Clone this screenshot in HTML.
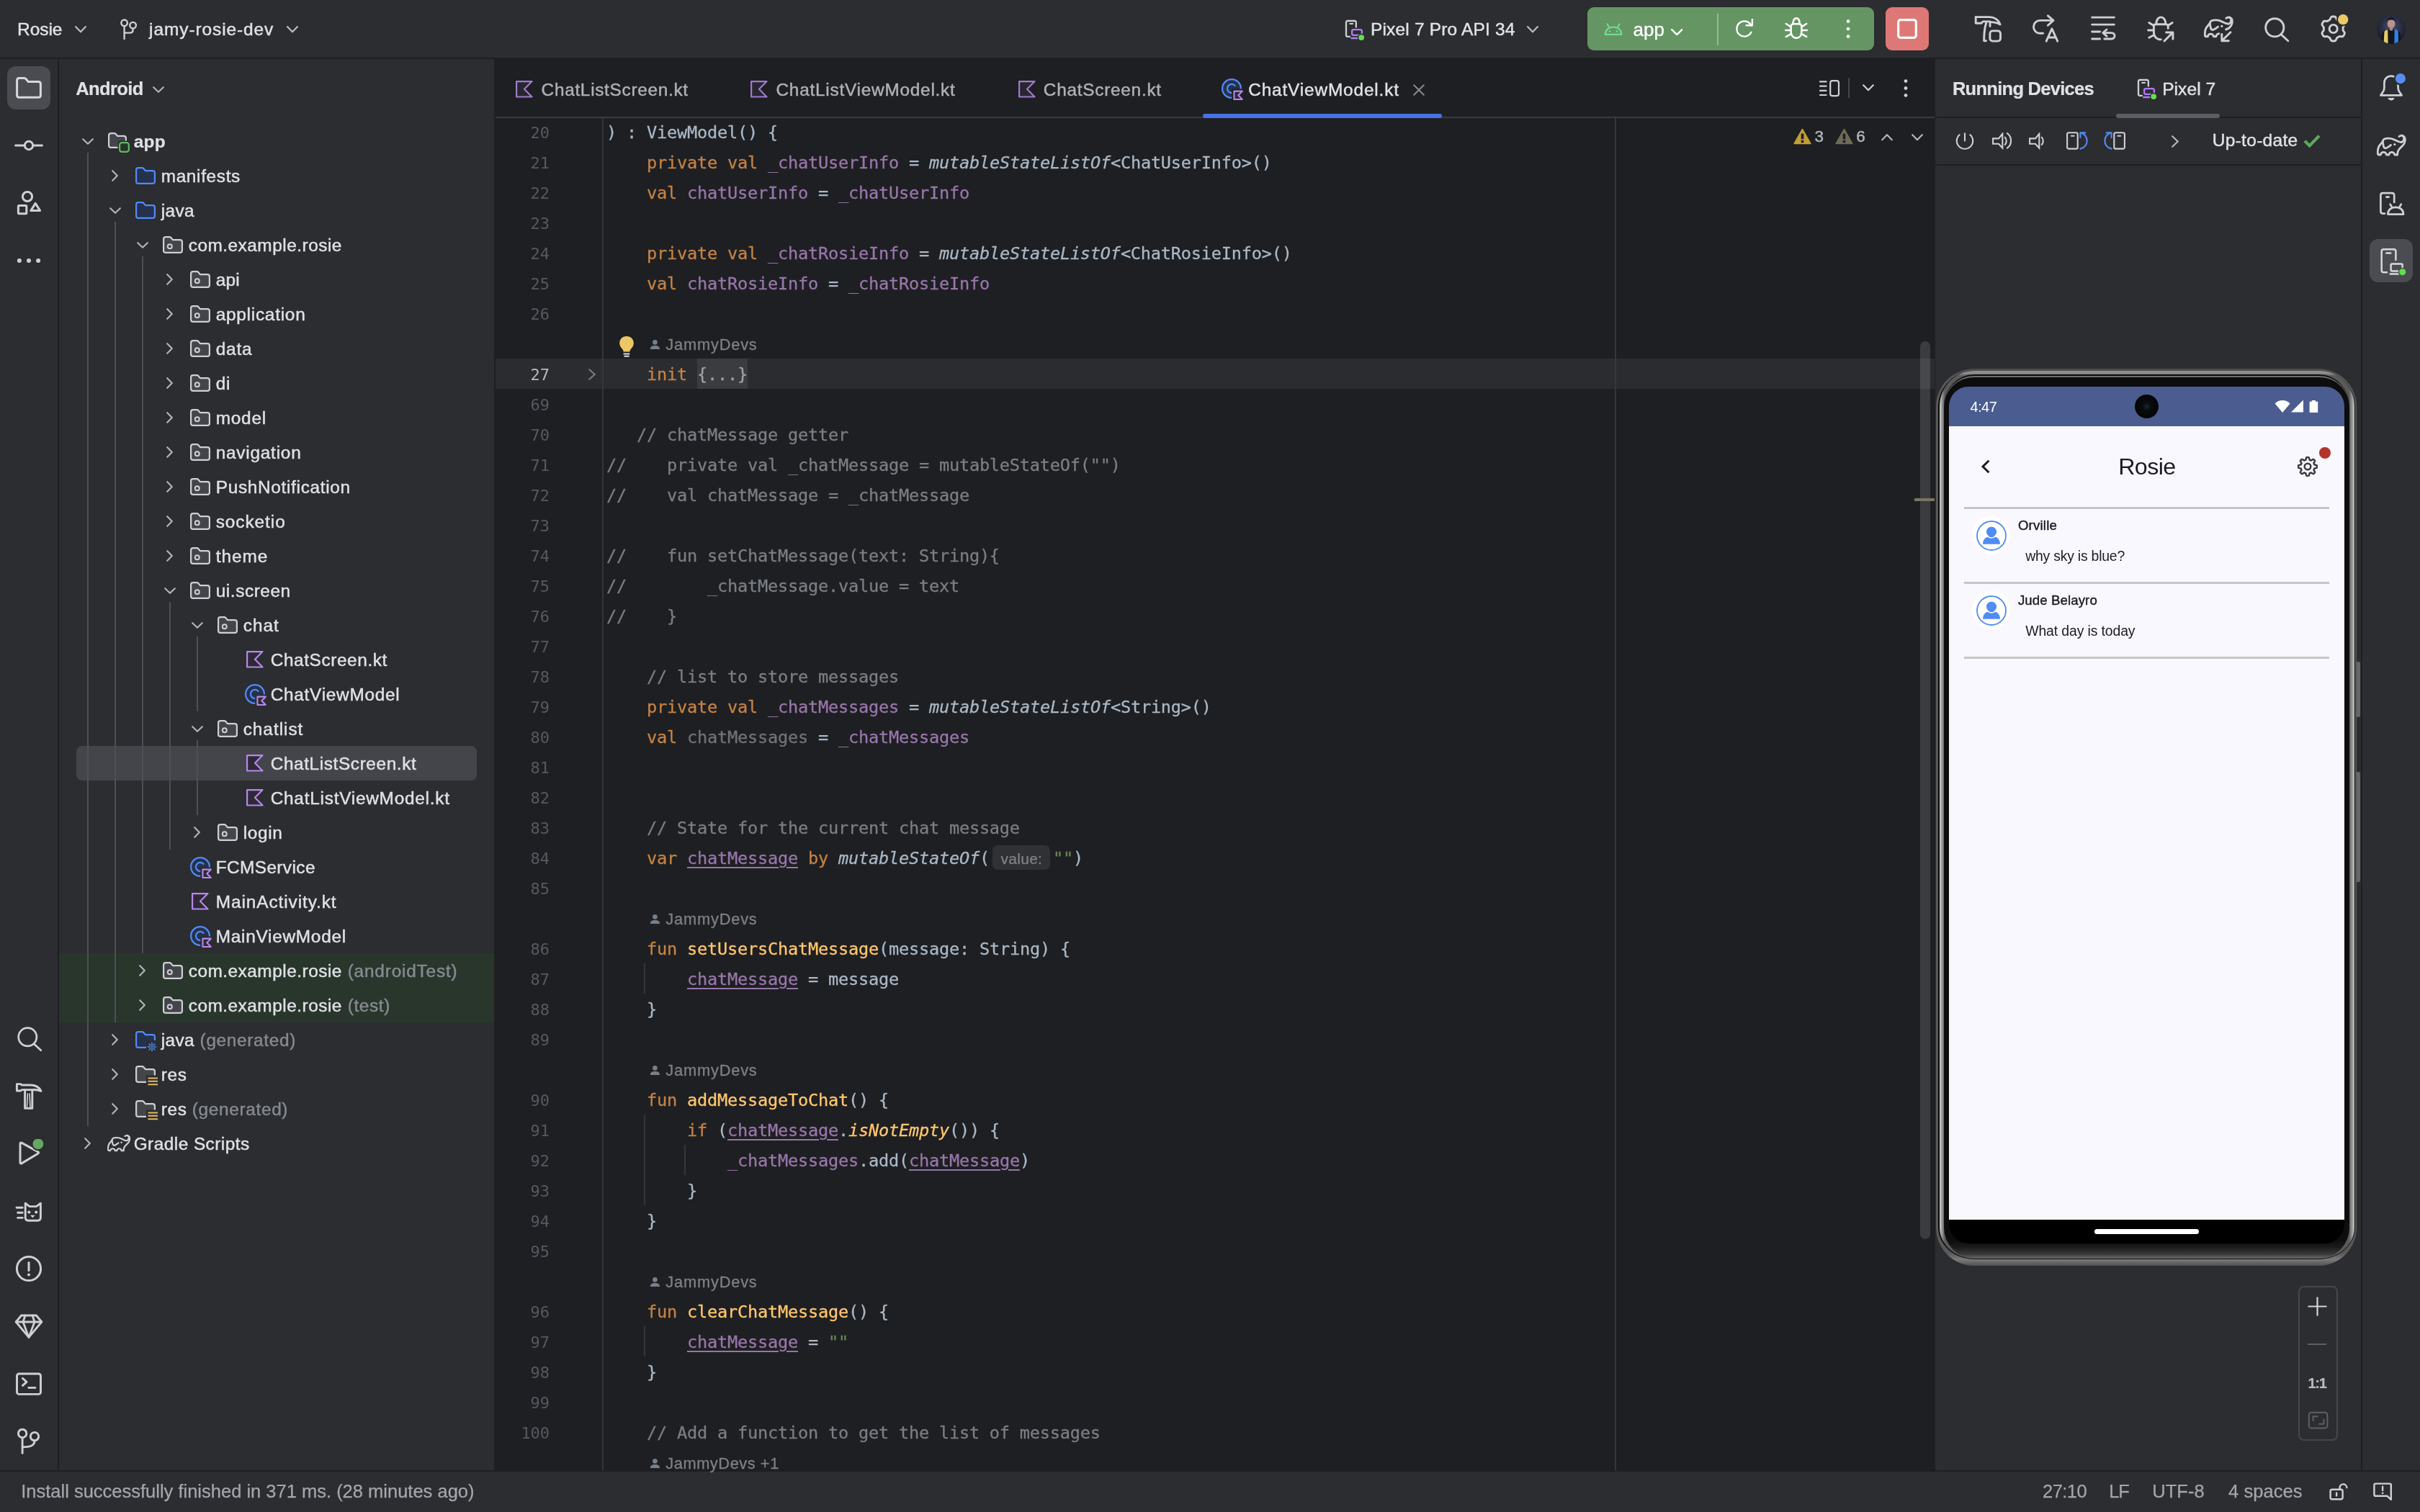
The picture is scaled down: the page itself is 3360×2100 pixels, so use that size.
<!DOCTYPE html>
<html lang="en"><head><meta charset="utf-8"><title>Rosie – ChatViewModel.kt</title>
<style>
html,body{margin:0;padding:0;background:#2b2d30;}
body{width:3360px;height:2100px;position:relative;overflow:hidden;font-family:"Liberation Sans",sans-serif;}
body div,body span,body svg{position:absolute;}
span{white-space:pre;}
body{will-change:transform;}
.code{font-family:"DejaVu Sans Mono","Liberation Mono",monospace;white-space:pre;-webkit-text-stroke:0.3px;}
.code span{position:static;}
</style></head><body>
<div style="left:0px;top:0px;width:3360px;height:2100px;background:#2b2d30;"></div>
<div style="left:686px;top:80px;width:2001px;height:1962px;background:#1e1f22;"></div>
<div style="left:0px;top:80px;width:3360px;height:2px;background:#1e1f22;"></div>
<div style="left:80px;top:82px;width:2px;height:1960px;background:#1e1f22;"></div>
<div style="left:3278px;top:82px;width:2px;height:1960px;background:#1e1f22;"></div>
<div style="left:0px;top:2042px;width:3360px;height:2px;background:#1e1f22;"></div>
<div style="left:2687px;top:82px;width:591px;height:1960px;background:#2b2d30;"></div>
<div style="left:2687px;top:162px;width:591px;height:2px;background:#1e1f22;"></div>
<div style="left:2687px;top:228px;width:591px;height:2px;background:#1e1f22;"></div>
<span style="left:24.0px;top:29.3px;font-size:24.5px;line-height:24.5px;color:#dfe1e5;letter-spacing:-0.04px;-webkit-text-stroke:0.45px #dfe1e5;">Rosie</span>
<svg style="left:104px;top:36px;" width="16" height="9.5" viewBox="0 0 16 9.5" fill="none"><path d="M1.2 1.2 L8.0 8.3 L14.8 1.2" stroke="#b8bbc2" stroke-width="2.3" stroke-linecap="round" stroke-linejoin="round"/></svg>
<svg style="left:166.5px;top:25.5px;" width="24" height="30" viewBox="0 0 24 30" fill="none"><g stroke="#ced0d6" stroke-width="2.4" stroke-linecap="round" fill="none"><circle cx="5.6" cy="5.8" r="4.3"/><circle cx="17.6" cy="9.2" r="4.3"/><path d="M5.6 10.2 V28"/><path d="M17.6 13.6 V15.4 Q17.6 19.6 13.4 19.6 H5.8"/></g></svg>
<span style="left:207.1px;top:29.3px;font-size:24.5px;line-height:24.5px;color:#dfe1e5;letter-spacing:0.89px;-webkit-text-stroke:0.45px #dfe1e5;">jamy-rosie-dev</span>
<svg style="left:397.7px;top:36px;" width="16" height="9.5" viewBox="0 0 16 9.5" fill="none"><path d="M1.2 1.2 L8.0 8.3 L14.8 1.2" stroke="#b8bbc2" stroke-width="2.3" stroke-linecap="round" stroke-linejoin="round"/></svg>
<svg style="left:1866px;top:26px;" width="30" height="32" viewBox="0 0 30 32" fill="none"><g stroke-width="2.3" fill="none" stroke-linecap="round"><path d="M16.85 11.6 V5 Q16.85 3 14.85 3 H5 Q3 3 3 5 V22.85 Q3 24.85 5 24.85 H8" stroke="#ced0d6"/><path d="M8.2 7.1 H12.2" stroke="#ced0d6" stroke-width="2"/><rect x="11.15" y="15.15" width="13.7" height="7.7" rx="2" stroke="#b07cf5"/><path d="M10.2 27 H22" stroke="#b07cf5"/></g><circle cx="24.2" cy="26.1" r="5.3" fill="#2b2d30"/><circle cx="24.2" cy="26.1" r="3.9" fill="#62e04a"/></svg>
<span style="left:1903.0px;top:29.3px;font-size:24.5px;line-height:24.5px;color:#dfe1e5;letter-spacing:0.17px;-webkit-text-stroke:0.45px #dfe1e5;">Pixel 7 Pro API 34</span>
<svg style="left:2120px;top:36px;" width="16" height="9.5" viewBox="0 0 16 9.5" fill="none"><path d="M1.2 1.2 L8.0 8.3 L14.8 1.2" stroke="#b8bbc2" stroke-width="2.3" stroke-linecap="round" stroke-linejoin="round"/></svg>
<div style="left:2204px;top:10px;width:398px;height:60px;background:#669564;border-radius:9px;"></div>
<svg style="left:2227.3px;top:31.6px;" width="26" height="18" viewBox="0 0 26 18" fill="none"><g stroke="#6fd99a" stroke-width="2.2" fill="none" stroke-linecap="round" stroke-linejoin="round"><path d="M1.7 15.9 C1.7 9.5 6.5 5.6 13 5.6 C19.5 5.6 24.3 9.5 24.3 15.9 Z"/><path d="M4.6 1.4 L7.3 6.2 M21.4 1.4 L18.7 6.2"/></g><circle cx="8" cy="11.5" r="1.3" fill="#6fd99a"/><circle cx="18" cy="11.5" r="1.3" fill="#6fd99a"/></svg>
<span style="left:2267.5px;top:28.2px;font-size:26px;line-height:26px;color:#ffffff;letter-spacing:0.07px;-webkit-text-stroke:0.35px #fff;">app</span>
<svg style="left:2319.7px;top:39.6px;" width="16.5" height="9.4" viewBox="0 0 16.5 9.4" fill="none"><path d="M1.2 1.2 L8.25 8.200000000000001 L15.3 1.2" stroke="#ffffff" stroke-width="2.4" stroke-linecap="round" stroke-linejoin="round"/></svg>
<div style="left:2384px;top:18.5px;width:2px;height:44px;background:rgba(255,255,255,0.32);"></div>
<svg style="left:2407.5px;top:26.3px;" width="28" height="28" viewBox="0 0 28 28" fill="none"><g stroke="#fff" stroke-width="2.4" fill="none" stroke-linecap="round" stroke-linejoin="round"><path d="M23.44 18.8 A10.6 10.6 0 1 1 23.7 9.7"/><path d="M24.9 1 V9.2 H16.6"/></g></svg>
<svg style="left:2478.3px;top:24px;" width="32" height="30" viewBox="0 0 32 30" fill="none"><g stroke="#fff" stroke-width="2.6" fill="none" stroke-linecap="round" stroke-linejoin="round"><path d="M8.6 14 C8.6 10.5 10 9.2 12 9.2 H20 C22 9.2 23.4 10.5 23.4 14 V20 C23.4 25.5 20.2 28.8 16 28.8 C11.8 28.8 8.6 25.5 8.6 20 Z"/><path d="M11.4 9 C11.4 3.8 13.6 1.4 16 1.4 C18.4 1.4 20.6 3.8 20.6 9"/><path d="M1.8 9 L8.4 13.2 M1.2 18 H8.4 M1.8 27 L8.8 23.2 M30.2 9 L23.6 13.2 M30.8 18 H23.6 M30.2 27 L23.2 23.2"/></g></svg>
<svg style="left:2563px;top:27px;" width="6" height="26" viewBox="0 0 6 26" fill="none"><circle cx="3" cy="2.6" r="2.4" fill="#ffffff"/><circle cx="3" cy="13.1" r="2.4" fill="#ffffff"/><circle cx="3" cy="23.6" r="2.4" fill="#ffffff"/></svg>
<div style="left:2618px;top:10px;width:60px;height:60px;background:#de7876;border-radius:9px;"></div>
<svg style="left:2632px;top:24px;" width="32" height="32" viewBox="0 0 32 32" fill="none"><rect x="3.7" y="3.7" width="24.6" height="24.6" rx="3" stroke="#fff" stroke-width="3.2"/></svg>
<svg style="left:2740px;top:20px;" width="40" height="40" viewBox="0 0 40 40" fill="none"><g stroke="#ced0d6" stroke-width="2.9" fill="none" stroke-linecap="round" stroke-linejoin="round"><path d="M3.2 3.6 H22 C29 3.6 35 7.5 36.9 13.8"/><path d="M3.2 3.6 V12.2 H11 L13 9.9 H23"/><path d="M23 10.6 C28.5 10.6 33 11.6 36.9 13.8"/><path d="M17.6 12 C15.2 20 14.6 29 14.7 36.8 H17.5"/><path d="M23 10.6 V16.5"/><rect x="22.9" y="22.9" width="14.6" height="14.2" rx="3.6"/></g></svg>
<svg style="left:2820px;top:20px;" width="40" height="40" viewBox="0 0 40 40" fill="none"><g stroke="#ced0d6" stroke-width="2.9" fill="none" stroke-linecap="round" stroke-linejoin="round"><path d="M16.6 26.3 H12.4 A8.95 8.95 0 0 1 12.4 8.4 H30.6"/><path d="M23.4 1.9 L30.9 8.4 L23.4 15.2"/><path d="M21.2 37.2 L28.9 19.9 L36.7 37.2 M23.6 32 H34.3"/></g></svg>
<svg style="left:2900px;top:20px;" width="40" height="40" viewBox="0 0 40 40" fill="none"><g stroke="#ced0d6" stroke-width="2.9" fill="none" stroke-linecap="round" stroke-linejoin="round"><path d="M4.6 4.1 H35.4 M4.6 14.1 H35.4 M4.6 24 H15.6 M4.6 34 H15.6"/><path d="M21.8 34 H31.8 A4.2 4.2 0 0 0 31.8 25.6 H20.4"/><path d="M25 21 L19.8 25.6 L25 30.2"/></g></svg>
<svg style="left:2980px;top:20px;" width="40" height="40" viewBox="0 0 40 40" fill="none"><g stroke="#ced0d6" stroke-width="2.9" fill="none" stroke-linecap="round" stroke-linejoin="round"><path d="M30.2 19.5 V16.6 C30.2 14.6 28.6 13.7 27 13.7 H13.6 C12 13.7 10.4 14.7 10.4 16.6 V25 C10.4 31 14.5 34.9 20.3 34.9"/><path d="M13.8 13.4 C13.8 7 17 3.9 20.3 3.9 C23.6 3.9 26.8 7 26.8 13.4"/><path d="M3.8 11.6 L10.2 15.6 M2.6 22 H10 M3.8 32.2 L10.4 28.8 M36.2 11.6 L30.4 15.2"/><path d="M25 36.9 L36.6 25.2 M27.6 25 H36.9 V34.2"/></g></svg>
<svg style="left:3060px;top:20px;" width="42" height="42" viewBox="0 0 42 42" fill="none"><g stroke="#ced0d6" stroke-width="2.9" fill="none" stroke-linecap="round" stroke-linejoin="round"><path d="M1.50 29.00 C1.47 28.47 1.12 27.33 1.30 25.80 C1.48 24.27 1.83 21.57 2.60 19.80 C3.37 18.03 4.97 16.47 5.90 15.20 C6.83 13.93 7.53 13.22 8.20 12.20 C8.87 11.18 8.80 9.82 9.90 9.10 C11.00 8.38 13.15 8.05 14.80 7.90 C16.45 7.75 18.13 7.87 19.80 8.20 C21.47 8.53 23.15 9.23 24.80 9.90 C26.45 10.57 28.17 11.65 29.70 12.20 C31.23 12.75 32.90 13.25 34.00 13.20 C35.10 13.15 35.70 12.57 36.30 11.90 C36.90 11.23 37.45 10.20 37.60 9.20 C37.75 8.20 37.68 6.78 37.20 5.90 C36.72 5.02 35.75 4.02 34.70 3.90 C33.65 3.78 31.53 4.98 30.90 5.20"/><path d="M35.20 4.00 C35.72 4.32 37.62 4.92 38.30 5.90 C38.98 6.88 39.35 8.35 39.30 9.90 C39.25 11.45 38.77 13.68 38.00 15.20 C37.23 16.72 35.93 18.05 34.70 19.00 C33.47 19.95 31.28 20.58 30.60 20.90"/><path transform="scale(1.0) translate(0,-2.3)" stroke-width="2.90" d="M20.8 28.9 C18.6 29.4 17.2 30.8 16.8 33 H13.5 C13 30.5 11.4 29.4 9.4 29.4 C7.4 29.4 5.8 30.5 5.3 33 H3 Q1.5 33 1.5 31.3"/><path d="M8.20 12.20 C8.32 12.92 8.62 15.18 8.90 16.50 C9.18 17.82 9.35 19.27 9.90 20.10 C10.45 20.93 11.27 21.50 12.20 21.50 C13.13 21.50 14.28 20.82 15.50 20.10 C16.72 19.38 18.83 17.68 19.50 17.20"/><path d="M37.00 24.80 L24.80 36.70 M24.80 27.40 L24.80 36.70 L34.40 36.70"/></g><circle cx="24.80" cy="16.30" r="1.60" fill="#ced0d6"/></svg>
<svg style="left:3140px;top:20px;" width="40" height="40" viewBox="0 0 40 40" fill="none"><g stroke="#ced0d6" stroke-width="2.9" fill="none" stroke-linecap="round"><circle cx="18.3" cy="18.3" r="12.6"/><path d="M27.6 28.2 L36.8 36.8"/></g></svg>
<svg style="left:3220px;top:20px;" width="44" height="40" viewBox="0 0 44 40" fill="none"><g stroke="#ced0d6" stroke-width="2.9" fill="none" stroke-linejoin="round"><path d="M33.10 20.00 L33.09 20.58 L33.05 21.17 L32.99 21.75 L33.25 22.39 L33.81 23.13 L34.38 23.93 L34.91 24.79 L35.34 25.69 L35.41 26.51 L35.11 27.18 L34.78 27.85 L34.42 28.50 L34.04 29.13 L33.63 29.75 L33.19 30.35 L32.45 30.70 L31.46 30.77 L30.45 30.75 L29.47 30.66 L28.54 30.54 L27.86 30.63 L27.39 30.98 L26.90 31.30 L26.40 31.60 L25.89 31.89 L25.36 32.14 L24.83 32.38 L24.41 32.93 L24.05 33.79 L23.63 34.68 L23.15 35.57 L22.59 36.39 L21.92 36.85 L21.18 36.94 L20.44 36.98 L19.70 37.00 L18.96 36.98 L18.22 36.94 L17.48 36.85 L16.81 36.39 L16.25 35.57 L15.77 34.68 L15.35 33.79 L14.99 32.93 L14.57 32.38 L14.04 32.14 L13.51 31.89 L13.00 31.60 L12.50 31.30 L12.01 30.98 L11.54 30.63 L10.86 30.54 L9.93 30.66 L8.95 30.75 L7.94 30.77 L6.95 30.70 L6.21 30.35 L5.77 29.75 L5.36 29.13 L4.98 28.50 L4.62 27.85 L4.29 27.18 L3.99 26.51 L4.06 25.69 L4.49 24.79 L5.02 23.93 L5.59 23.13 L6.15 22.39 L6.41 21.75 L6.35 21.17 L6.31 20.58 L6.30 20.00 L6.31 19.42 L6.35 18.83 L6.41 18.25 L6.15 17.61 L5.59 16.87 L5.02 16.07 L4.49 15.21 L4.06 14.31 L3.99 13.49 L4.29 12.82 L4.62 12.15 L4.98 11.50 L5.36 10.87 L5.77 10.25 L6.21 9.65 L6.95 9.30 L7.94 9.23 L8.95 9.25 L9.93 9.34 L10.86 9.46 L11.54 9.37 L12.01 9.02 L12.50 8.70 L13.00 8.40 L13.51 8.11 L14.04 7.86 L14.57 7.62 L14.99 7.07 L15.35 6.21 L15.77 5.32 L16.25 4.43 L16.81 3.61 L17.48 3.15 L18.22 3.06 L18.96 3.02 L19.70 3.00 L20.44 3.02 L21.18 3.06 L21.92 3.15 L22.59 3.61 L23.15 4.43 L23.63 5.32 L24.05 6.21 L24.41 7.07 L24.83 7.62 L25.36 7.86 L25.89 8.11 L26.40 8.40 L26.90 8.70 L27.39 9.02 L27.86 9.37 L28.54 9.46 L29.47 9.34 L30.45 9.25 L31.46 9.23 L32.45 9.30 L33.19 9.65 L33.63 10.25 L34.04 10.87 L34.42 11.50 L34.78 12.15 L35.11 12.82 L35.41 13.49 L35.34 14.31 L34.91 15.21 L34.38 16.07 L33.81 16.87 L33.25 17.61 L32.99 18.25 L33.05 18.83 L33.09 19.42 Z"/><circle cx="19.7" cy="20" r="5.6"/></g><circle cx="33.2" cy="7.1" r="9.2" fill="#2b2d30"/><circle cx="33.2" cy="7.1" r="7.2" fill="#ecc864"/></svg>
<svg style="left:3300px;top:20.5px;" width="40" height="40" viewBox="0 0 40 40" fill="none"><defs><clipPath id="avc"><circle cx="20" cy="20" r="19.8"/></clipPath><radialGradient id="avg" cx="0.5" cy="0.4" r="0.6"><stop offset="0" stop-color="#4a4f72"/><stop offset="0.6" stop-color="#2a2c44"/><stop offset="1" stop-color="#171824"/></radialGradient></defs><g clip-path="url(#avc)"><rect width="40" height="40" fill="url(#avg)"/><path d="M7 40 V28 C7 22 12 20 20 20 C28 20 33 22 33 28 V40 Z" fill="#14151b"/><path d="M9.5 40 L10.5 23 C11 21.5 13 20.6 15.2 20.2 L15.6 40 Z" fill="#e3cb63"/><path d="M24.4 40 L24.6 19.6 C27 20 29 21 29.8 22.6 L30 40 Z" fill="#2c82e6"/><ellipse cx="20" cy="11.8" rx="5.4" ry="6.6" fill="#b9958f"/><path d="M14.2 9.5 C14.2 4.5 17 3 20 3 C23 3 25.8 4.5 25.8 9.5 C24.5 7 22.5 6.4 20 6.4 C17.5 6.4 15.5 7 14.2 9.5 Z" fill="#1a1a22"/><rect x="18" y="16.5" width="4" height="5" fill="#a8857f"/></g></svg>
<div style="left:10px;top:92px;width:60px;height:60px;background:#4a4c51;border-radius:12px;"></div>
<svg style="left:20px;top:102px;" width="40" height="40" viewBox="0 0 40 40" fill="none"><path d="M3.6 9.4 Q3.6 6.4 6.6 6.4 H13.6 Q15 6.4 15.9 7.5 L19.3 11.6 H33.4 Q36.4 11.6 36.4 14.6 V30.3 Q36.4 33.3 33.4 33.3 H6.6 Q3.6 33.3 3.6 30.3 Z" stroke="#d6d8dd" stroke-width="3.0" fill="none" stroke-linejoin="round"/></svg>
<svg style="left:20px;top:182px;" width="40" height="40" viewBox="0 0 40 40" fill="none"><g stroke="#ced0d6" stroke-width="3.0" fill="none" stroke-linecap="round"><circle cx="20" cy="20" r="5.7"/><path d="M1.6 20 H13.6 M26.4 20 H38.4"/></g></svg>
<svg style="left:20px;top:262px;" width="40" height="40" viewBox="0 0 40 40" fill="none"><g stroke="#ced0d6" stroke-width="3.0" fill="none" stroke-linejoin="round"><circle cx="18" cy="11" r="6.6"/><rect x="5.4" y="23.4" width="11.4" height="11.4" rx="1"/><path d="M29.2 20.4 L35.6 30.6 H22.8 Z"/></g></svg>
<svg style="left:20px;top:352px;" width="40" height="20" viewBox="0 0 40 20" fill="none"><circle cx="6.9" cy="10" r="3" fill="#ced0d6"/><circle cx="20" cy="10" r="3" fill="#ced0d6"/><circle cx="33.1" cy="10" r="3" fill="#ced0d6"/></svg>
<svg style="left:20px;top:1422px;" width="40" height="40" viewBox="0 0 40 40" fill="none"><g stroke="#ced0d6" stroke-width="2.7" fill="none" stroke-linecap="round"><circle cx="18.3" cy="18.3" r="12.6"/><path d="M27.6 28.2 L36.8 36.8"/></g></svg>
<svg style="left:20px;top:1502px;" width="40" height="40" viewBox="0 0 40 40" fill="none"><g stroke="#ced0d6" stroke-width="2.9" fill="none" stroke-linecap="round" stroke-linejoin="round"><path d="M3.4 3.6 H8.5 L10.5 5 H22 C29 5 34.5 8 37 13.4 C33 11.8 29 11.4 25.4 11.6 H10.5 L8.5 13 H3.4 Z"/><path d="M14.6 12 V37.4 H24.8 V12"/><path d="M18.4 17 L17.4 37 M21 17 L22 37" stroke-width="1.6"/></g></svg>
<svg style="left:20px;top:1582px;" width="44" height="40" viewBox="0 0 44 40" fill="none"><path d="M8 6.8 Q8 4.2 10.3 5.4 L32.6 17.6 Q34.6 18.9 32.6 20.2 L10.3 33.6 Q8 34.8 8 32.2 Z" stroke="#ced0d6" stroke-width="3.0" fill="none" stroke-linejoin="round"/><circle cx="32.9" cy="6.8" r="9.4" fill="#2b2d30"/><circle cx="32.9" cy="6.8" r="7.4" fill="#65a863"/></svg>
<svg style="left:20px;top:1662px;" width="40" height="40" viewBox="0 0 40 40" fill="none"><g stroke="#ced0d6" stroke-width="2.9" fill="none" stroke-linecap="round" stroke-linejoin="round"><path d="M15.2 9.2 L21 13.6 H30.6 L36.4 9.2 V29 Q36.4 33.2 32.2 33.2 H19.4 Q15.2 33.2 15.2 29 Z"/><path d="M3 15.2 H11.2 M4.6 22.2 H11.2 M4.6 29.4 H11.2"/></g><circle cx="20.3" cy="21.6" r="2.1" fill="#ced0d6"/><circle cx="30.2" cy="21.6" r="2.1" fill="#ced0d6"/><path d="M22 25.8 H28.6 L25.3 29.6 Z" fill="#ced0d6"/></svg>
<svg style="left:20px;top:1742px;" width="40" height="40" viewBox="0 0 40 40" fill="none"><g stroke="#ced0d6" stroke-width="3.0" fill="none" stroke-linecap="round"><circle cx="20" cy="20" r="16.6"/><path d="M20 11.6 V22.6"/></g><circle cx="20" cy="28.4" r="2" fill="#ced0d6"/></svg>
<svg style="left:20px;top:1822px;" width="40" height="40" viewBox="0 0 40 40" fill="none"><g stroke="#ced0d6" stroke-width="2.8" fill="none" stroke-linecap="round" stroke-linejoin="round"><path d="M9.6 5 H30.4 L37.8 14 L20 35.4 L2.2 14 Z"/><path d="M2.2 14 H37.8"/><path d="M15 5 L12 14 L20 35.4 L28 14 L25 5"/></g></svg>
<svg style="left:20px;top:1902px;" width="40" height="40" viewBox="0 0 40 40" fill="none"><g stroke="#ced0d6" stroke-width="2.9" fill="none" stroke-linecap="round" stroke-linejoin="round"><rect x="3.5" y="6" width="33" height="28.4" rx="3"/><path d="M11.4 12.4 L17 17.4 L11.4 22.4 M19.8 25.4 H29"/></g></svg>
<svg style="left:20px;top:1982px;" width="40" height="40" viewBox="0 0 40 40" fill="none"><g stroke="#ced0d6" stroke-width="2.9" fill="none" stroke-linecap="round"><circle cx="11.1" cy="8.9" r="5.7"/><circle cx="28" cy="13.1" r="5.7"/><path d="M11.1 14.8 V36.2"/><path d="M28 19 C28 26 22 27.6 11.1 27.8"/></g></svg>
<span style="left:105.2px;top:110.7px;font-size:25.5px;line-height:25.5px;color:#dfe1e5;font-weight:700;letter-spacing:-0.60px;-webkit-text-stroke:0.225px #dfe1e5;">Android</span>
<svg style="left:212px;top:120px;" width="16" height="9" viewBox="0 0 16 9" fill="none"><path d="M1.2 1.2 L8.0 7.8 L14.8 1.2" stroke="#b0b3ba" stroke-width="2.2" stroke-linecap="round" stroke-linejoin="round"/></svg>
<div style="left:82px;top:1324px;width:604px;height:96px;background:#28362c;"></div>
<div style="left:106px;top:1036px;width:556px;height:48px;background:#43454a;border-radius:8px;"></div>
<div style="left:120.5px;top:212px;width:2px;height:1352px;background:#4d5056;"></div>
<div style="left:158.5px;top:308px;width:2px;height:1112px;background:#4d5056;"></div>
<div style="left:196.5px;top:356px;width:2px;height:968px;background:#4d5056;"></div>
<div style="left:234.5px;top:836px;width:2px;height:344px;background:#4d5056;"></div>
<div style="left:272.5px;top:884px;width:2px;height:104px;background:#4d5056;"></div>
<div style="left:272.5px;top:1028px;width:2px;height:104px;background:#4d5056;"></div>
<svg style="left:113.5px;top:191.5px;" width="16" height="9" viewBox="0 0 16 9" fill="none"><path d="M1.2 1.2 L8.0 7.8 L14.8 1.2" stroke="#b0b3ba" stroke-width="2.2" stroke-linecap="round" stroke-linejoin="round"/></svg>
<svg style="left:150px;top:184px;" width="32" height="30" viewBox="0 0 32 30" fill="none"><path d="M1.1 4.1 Q1.1 1.1 4.1 1.1 H8.6 Q9.8 1.1 10.6 2 L13 4.9 H21.9 Q24.9 4.9 24.9 7.9 V17.9 Q24.9 20.9 21.9 20.9 H4.1 Q1.1 20.9 1.1 17.9 Z" stroke="#ced0d6" stroke-width="2.2" fill="#43454a" stroke-linejoin="round"/><rect x="13.5" y="11.5" width="17" height="17" rx="4" fill="#2b2d30"/><rect x="16.1" y="14.1" width="12.8" height="12.8" rx="3.2" stroke="#5fb865" stroke-width="2.2" fill="#253627"/></svg>
<span style="left:185.7px;top:185.3px;font-size:24.4px;line-height:24.4px;color:#dfe1e5;font-weight:700;letter-spacing:0.29px;-webkit-text-stroke:0.225px #dfe1e5;">app</span>
<svg style="left:155.0px;top:236px;" width="9" height="16" viewBox="0 0 9 16" fill="none"><path d="M1.2 1.2 L7.8 8.0 L1.2 14.8" stroke="#b0b3ba" stroke-width="2.2" stroke-linecap="round" stroke-linejoin="round"/></svg>
<svg style="left:188px;top:232px;" width="28" height="24" viewBox="0 0 28 24" fill="none"><path d="M1.1 4.1 Q1.1 1.1 4.1 1.1 H9.3 Q10.5 1.1 11.3 2 L13.9 5.1 H23.9 Q26.9 5.1 26.9 8.1 V19.9 Q26.9 22.9 23.9 22.9 H4.1 Q1.1 22.9 1.1 19.9 Z" stroke="#548af7" stroke-width="2.2" fill="#25324d" stroke-linejoin="round"/></svg>
<span style="left:223.7px;top:233.3px;font-size:24.4px;line-height:24.4px;color:#dfe1e5;letter-spacing:0.65px;-webkit-text-stroke:0.45px #dfe1e5;">manifests</span>
<svg style="left:151.5px;top:287.5px;" width="16" height="9" viewBox="0 0 16 9" fill="none"><path d="M1.2 1.2 L8.0 7.8 L14.8 1.2" stroke="#b0b3ba" stroke-width="2.2" stroke-linecap="round" stroke-linejoin="round"/></svg>
<svg style="left:188px;top:280px;" width="28" height="24" viewBox="0 0 28 24" fill="none"><path d="M1.1 4.1 Q1.1 1.1 4.1 1.1 H9.3 Q10.5 1.1 11.3 2 L13.9 5.1 H23.9 Q26.9 5.1 26.9 8.1 V19.9 Q26.9 22.9 23.9 22.9 H4.1 Q1.1 22.9 1.1 19.9 Z" stroke="#548af7" stroke-width="2.2" fill="#25324d" stroke-linejoin="round"/></svg>
<span style="left:223.7px;top:281.3px;font-size:24.4px;line-height:24.4px;color:#dfe1e5;letter-spacing:0.37px;-webkit-text-stroke:0.45px #dfe1e5;">java</span>
<svg style="left:189.5px;top:335.5px;" width="16" height="9" viewBox="0 0 16 9" fill="none"><path d="M1.2 1.2 L8.0 7.8 L14.8 1.2" stroke="#b0b3ba" stroke-width="2.2" stroke-linecap="round" stroke-linejoin="round"/></svg>
<svg style="left:226px;top:328px;" width="28" height="24" viewBox="0 0 28 24" fill="none"><path d="M1.1 4.1 Q1.1 1.1 4.1 1.1 H9.3 Q10.5 1.1 11.3 2 L13.9 5.1 H23.9 Q26.9 5.1 26.9 8.1 V19.9 Q26.9 22.9 23.9 22.9 H4.1 Q1.1 22.9 1.1 19.9 Z" stroke="#ced0d6" stroke-width="2.2" fill="#43454a" stroke-linejoin="round"/><circle cx="9.8" cy="14.3" r="3" stroke="#ced0d6" stroke-width="2"/></svg>
<span style="left:261.7px;top:329.3px;font-size:24.4px;line-height:24.4px;color:#dfe1e5;letter-spacing:0.50px;-webkit-text-stroke:0.45px #dfe1e5;">com.example.rosie</span>
<svg style="left:231.0px;top:380px;" width="9" height="16" viewBox="0 0 9 16" fill="none"><path d="M1.2 1.2 L7.8 8.0 L1.2 14.8" stroke="#b0b3ba" stroke-width="2.2" stroke-linecap="round" stroke-linejoin="round"/></svg>
<svg style="left:264px;top:376px;" width="28" height="24" viewBox="0 0 28 24" fill="none"><path d="M1.1 4.1 Q1.1 1.1 4.1 1.1 H9.3 Q10.5 1.1 11.3 2 L13.9 5.1 H23.9 Q26.9 5.1 26.9 8.1 V19.9 Q26.9 22.9 23.9 22.9 H4.1 Q1.1 22.9 1.1 19.9 Z" stroke="#ced0d6" stroke-width="2.2" fill="#43454a" stroke-linejoin="round"/><circle cx="9.8" cy="14.3" r="3" stroke="#ced0d6" stroke-width="2"/></svg>
<span style="left:299.7px;top:377.3px;font-size:24.4px;line-height:24.4px;color:#dfe1e5;letter-spacing:0.23px;-webkit-text-stroke:0.45px #dfe1e5;">api</span>
<svg style="left:231.0px;top:428px;" width="9" height="16" viewBox="0 0 9 16" fill="none"><path d="M1.2 1.2 L7.8 8.0 L1.2 14.8" stroke="#b0b3ba" stroke-width="2.2" stroke-linecap="round" stroke-linejoin="round"/></svg>
<svg style="left:264px;top:424px;" width="28" height="24" viewBox="0 0 28 24" fill="none"><path d="M1.1 4.1 Q1.1 1.1 4.1 1.1 H9.3 Q10.5 1.1 11.3 2 L13.9 5.1 H23.9 Q26.9 5.1 26.9 8.1 V19.9 Q26.9 22.9 23.9 22.9 H4.1 Q1.1 22.9 1.1 19.9 Z" stroke="#ced0d6" stroke-width="2.2" fill="#43454a" stroke-linejoin="round"/><circle cx="9.8" cy="14.3" r="3" stroke="#ced0d6" stroke-width="2"/></svg>
<span style="left:299.7px;top:425.3px;font-size:24.4px;line-height:24.4px;color:#dfe1e5;letter-spacing:0.74px;-webkit-text-stroke:0.45px #dfe1e5;">application</span>
<svg style="left:231.0px;top:476px;" width="9" height="16" viewBox="0 0 9 16" fill="none"><path d="M1.2 1.2 L7.8 8.0 L1.2 14.8" stroke="#b0b3ba" stroke-width="2.2" stroke-linecap="round" stroke-linejoin="round"/></svg>
<svg style="left:264px;top:472px;" width="28" height="24" viewBox="0 0 28 24" fill="none"><path d="M1.1 4.1 Q1.1 1.1 4.1 1.1 H9.3 Q10.5 1.1 11.3 2 L13.9 5.1 H23.9 Q26.9 5.1 26.9 8.1 V19.9 Q26.9 22.9 23.9 22.9 H4.1 Q1.1 22.9 1.1 19.9 Z" stroke="#ced0d6" stroke-width="2.2" fill="#43454a" stroke-linejoin="round"/><circle cx="9.8" cy="14.3" r="3" stroke="#ced0d6" stroke-width="2"/></svg>
<span style="left:299.7px;top:473.3px;font-size:24.4px;line-height:24.4px;color:#dfe1e5;letter-spacing:0.81px;-webkit-text-stroke:0.45px #dfe1e5;">data</span>
<svg style="left:231.0px;top:524px;" width="9" height="16" viewBox="0 0 9 16" fill="none"><path d="M1.2 1.2 L7.8 8.0 L1.2 14.8" stroke="#b0b3ba" stroke-width="2.2" stroke-linecap="round" stroke-linejoin="round"/></svg>
<svg style="left:264px;top:520px;" width="28" height="24" viewBox="0 0 28 24" fill="none"><path d="M1.1 4.1 Q1.1 1.1 4.1 1.1 H9.3 Q10.5 1.1 11.3 2 L13.9 5.1 H23.9 Q26.9 5.1 26.9 8.1 V19.9 Q26.9 22.9 23.9 22.9 H4.1 Q1.1 22.9 1.1 19.9 Z" stroke="#ced0d6" stroke-width="2.2" fill="#43454a" stroke-linejoin="round"/><circle cx="9.8" cy="14.3" r="3" stroke="#ced0d6" stroke-width="2"/></svg>
<span style="left:299.7px;top:521.3px;font-size:24.4px;line-height:24.4px;color:#dfe1e5;letter-spacing:0.82px;-webkit-text-stroke:0.45px #dfe1e5;">di</span>
<svg style="left:231.0px;top:572px;" width="9" height="16" viewBox="0 0 9 16" fill="none"><path d="M1.2 1.2 L7.8 8.0 L1.2 14.8" stroke="#b0b3ba" stroke-width="2.2" stroke-linecap="round" stroke-linejoin="round"/></svg>
<svg style="left:264px;top:568px;" width="28" height="24" viewBox="0 0 28 24" fill="none"><path d="M1.1 4.1 Q1.1 1.1 4.1 1.1 H9.3 Q10.5 1.1 11.3 2 L13.9 5.1 H23.9 Q26.9 5.1 26.9 8.1 V19.9 Q26.9 22.9 23.9 22.9 H4.1 Q1.1 22.9 1.1 19.9 Z" stroke="#ced0d6" stroke-width="2.2" fill="#43454a" stroke-linejoin="round"/><circle cx="9.8" cy="14.3" r="3" stroke="#ced0d6" stroke-width="2"/></svg>
<span style="left:299.7px;top:569.3px;font-size:24.4px;line-height:24.4px;color:#dfe1e5;letter-spacing:0.76px;-webkit-text-stroke:0.45px #dfe1e5;">model</span>
<svg style="left:231.0px;top:620px;" width="9" height="16" viewBox="0 0 9 16" fill="none"><path d="M1.2 1.2 L7.8 8.0 L1.2 14.8" stroke="#b0b3ba" stroke-width="2.2" stroke-linecap="round" stroke-linejoin="round"/></svg>
<svg style="left:264px;top:616px;" width="28" height="24" viewBox="0 0 28 24" fill="none"><path d="M1.1 4.1 Q1.1 1.1 4.1 1.1 H9.3 Q10.5 1.1 11.3 2 L13.9 5.1 H23.9 Q26.9 5.1 26.9 8.1 V19.9 Q26.9 22.9 23.9 22.9 H4.1 Q1.1 22.9 1.1 19.9 Z" stroke="#ced0d6" stroke-width="2.2" fill="#43454a" stroke-linejoin="round"/><circle cx="9.8" cy="14.3" r="3" stroke="#ced0d6" stroke-width="2"/></svg>
<span style="left:299.7px;top:617.3px;font-size:24.4px;line-height:24.4px;color:#dfe1e5;letter-spacing:0.76px;-webkit-text-stroke:0.45px #dfe1e5;">navigation</span>
<svg style="left:231.0px;top:668px;" width="9" height="16" viewBox="0 0 9 16" fill="none"><path d="M1.2 1.2 L7.8 8.0 L1.2 14.8" stroke="#b0b3ba" stroke-width="2.2" stroke-linecap="round" stroke-linejoin="round"/></svg>
<svg style="left:264px;top:664px;" width="28" height="24" viewBox="0 0 28 24" fill="none"><path d="M1.1 4.1 Q1.1 1.1 4.1 1.1 H9.3 Q10.5 1.1 11.3 2 L13.9 5.1 H23.9 Q26.9 5.1 26.9 8.1 V19.9 Q26.9 22.9 23.9 22.9 H4.1 Q1.1 22.9 1.1 19.9 Z" stroke="#ced0d6" stroke-width="2.2" fill="#43454a" stroke-linejoin="round"/><circle cx="9.8" cy="14.3" r="3" stroke="#ced0d6" stroke-width="2"/></svg>
<span style="left:299.7px;top:665.3px;font-size:24.4px;line-height:24.4px;color:#dfe1e5;letter-spacing:0.68px;-webkit-text-stroke:0.45px #dfe1e5;">PushNotification</span>
<svg style="left:231.0px;top:716px;" width="9" height="16" viewBox="0 0 9 16" fill="none"><path d="M1.2 1.2 L7.8 8.0 L1.2 14.8" stroke="#b0b3ba" stroke-width="2.2" stroke-linecap="round" stroke-linejoin="round"/></svg>
<svg style="left:264px;top:712px;" width="28" height="24" viewBox="0 0 28 24" fill="none"><path d="M1.1 4.1 Q1.1 1.1 4.1 1.1 H9.3 Q10.5 1.1 11.3 2 L13.9 5.1 H23.9 Q26.9 5.1 26.9 8.1 V19.9 Q26.9 22.9 23.9 22.9 H4.1 Q1.1 22.9 1.1 19.9 Z" stroke="#ced0d6" stroke-width="2.2" fill="#43454a" stroke-linejoin="round"/><circle cx="9.8" cy="14.3" r="3" stroke="#ced0d6" stroke-width="2"/></svg>
<span style="left:299.7px;top:713.3px;font-size:24.4px;line-height:24.4px;color:#dfe1e5;letter-spacing:0.94px;-webkit-text-stroke:0.45px #dfe1e5;">socketio</span>
<svg style="left:231.0px;top:764px;" width="9" height="16" viewBox="0 0 9 16" fill="none"><path d="M1.2 1.2 L7.8 8.0 L1.2 14.8" stroke="#b0b3ba" stroke-width="2.2" stroke-linecap="round" stroke-linejoin="round"/></svg>
<svg style="left:264px;top:760px;" width="28" height="24" viewBox="0 0 28 24" fill="none"><path d="M1.1 4.1 Q1.1 1.1 4.1 1.1 H9.3 Q10.5 1.1 11.3 2 L13.9 5.1 H23.9 Q26.9 5.1 26.9 8.1 V19.9 Q26.9 22.9 23.9 22.9 H4.1 Q1.1 22.9 1.1 19.9 Z" stroke="#ced0d6" stroke-width="2.2" fill="#43454a" stroke-linejoin="round"/><circle cx="9.8" cy="14.3" r="3" stroke="#ced0d6" stroke-width="2"/></svg>
<span style="left:299.7px;top:761.3px;font-size:24.4px;line-height:24.4px;color:#dfe1e5;letter-spacing:0.94px;-webkit-text-stroke:0.45px #dfe1e5;">theme</span>
<svg style="left:227.5px;top:815.5px;" width="16" height="9" viewBox="0 0 16 9" fill="none"><path d="M1.2 1.2 L8.0 7.8 L14.8 1.2" stroke="#b0b3ba" stroke-width="2.2" stroke-linecap="round" stroke-linejoin="round"/></svg>
<svg style="left:264px;top:808px;" width="28" height="24" viewBox="0 0 28 24" fill="none"><path d="M1.1 4.1 Q1.1 1.1 4.1 1.1 H9.3 Q10.5 1.1 11.3 2 L13.9 5.1 H23.9 Q26.9 5.1 26.9 8.1 V19.9 Q26.9 22.9 23.9 22.9 H4.1 Q1.1 22.9 1.1 19.9 Z" stroke="#ced0d6" stroke-width="2.2" fill="#43454a" stroke-linejoin="round"/><circle cx="9.8" cy="14.3" r="3" stroke="#ced0d6" stroke-width="2"/></svg>
<span style="left:299.7px;top:809.3px;font-size:24.4px;line-height:24.4px;color:#dfe1e5;letter-spacing:0.56px;-webkit-text-stroke:0.45px #dfe1e5;">ui.screen</span>
<svg style="left:265.5px;top:863.5px;" width="16" height="9" viewBox="0 0 16 9" fill="none"><path d="M1.2 1.2 L8.0 7.8 L14.8 1.2" stroke="#b0b3ba" stroke-width="2.2" stroke-linecap="round" stroke-linejoin="round"/></svg>
<svg style="left:302px;top:856px;" width="28" height="24" viewBox="0 0 28 24" fill="none"><path d="M1.1 4.1 Q1.1 1.1 4.1 1.1 H9.3 Q10.5 1.1 11.3 2 L13.9 5.1 H23.9 Q26.9 5.1 26.9 8.1 V19.9 Q26.9 22.9 23.9 22.9 H4.1 Q1.1 22.9 1.1 19.9 Z" stroke="#ced0d6" stroke-width="2.2" fill="#43454a" stroke-linejoin="round"/><circle cx="9.8" cy="14.3" r="3" stroke="#ced0d6" stroke-width="2"/></svg>
<span style="left:337.7px;top:857.3px;font-size:24.4px;line-height:24.4px;color:#dfe1e5;letter-spacing:1.03px;-webkit-text-stroke:0.45px #dfe1e5;">chat</span>
<svg style="left:342.2px;top:904px;" width="24" height="24" viewBox="0 0 24 24" fill="none"><path d="M1.1 1.1 H22.5 L12.0 11.8 L22.5 22.5 H1.1 Z" stroke="#b589ec" stroke-width="2.2" fill="#2f2936" stroke-linejoin="round"/></svg>
<span style="left:375.7px;top:905.3px;font-size:24.4px;line-height:24.4px;color:#dfe1e5;letter-spacing:0.59px;-webkit-text-stroke:0.45px #dfe1e5;">ChatScreen.kt</span>
<svg style="left:340px;top:950px;" width="34" height="34" viewBox="0 0 34 34" fill="none"><circle cx="14" cy="14" r="12.9" stroke="#548af7" stroke-width="2.2" fill="#25324d"/><path d="M18.6 9.9 A6.1 6.1 0 1 0 18.6 18.1" stroke="#548af7" stroke-width="2.2" stroke-linecap="round"/><rect x="14.2" y="14.4" width="18" height="18" fill="#2b2d30"/><g transform="translate(16.4,16.6)"><path d="M1.05 1.05 H12.35 L6.9 6.7 L12.35 12.35 H1.05 Z" stroke="#b589ec" stroke-width="2.1" fill="#2f2936" stroke-linejoin="round"/></g></svg>
<span style="left:375.7px;top:953.3px;font-size:24.4px;line-height:24.4px;color:#dfe1e5;letter-spacing:0.72px;-webkit-text-stroke:0.45px #dfe1e5;">ChatViewModel</span>
<svg style="left:265.5px;top:1007.5px;" width="16" height="9" viewBox="0 0 16 9" fill="none"><path d="M1.2 1.2 L8.0 7.8 L14.8 1.2" stroke="#b0b3ba" stroke-width="2.2" stroke-linecap="round" stroke-linejoin="round"/></svg>
<svg style="left:302px;top:1000px;" width="28" height="24" viewBox="0 0 28 24" fill="none"><path d="M1.1 4.1 Q1.1 1.1 4.1 1.1 H9.3 Q10.5 1.1 11.3 2 L13.9 5.1 H23.9 Q26.9 5.1 26.9 8.1 V19.9 Q26.9 22.9 23.9 22.9 H4.1 Q1.1 22.9 1.1 19.9 Z" stroke="#ced0d6" stroke-width="2.2" fill="#43454a" stroke-linejoin="round"/><circle cx="9.8" cy="14.3" r="3" stroke="#ced0d6" stroke-width="2"/></svg>
<span style="left:337.7px;top:1001.3px;font-size:24.4px;line-height:24.4px;color:#dfe1e5;letter-spacing:0.96px;-webkit-text-stroke:0.45px #dfe1e5;">chatlist</span>
<svg style="left:342.2px;top:1048px;" width="24" height="24" viewBox="0 0 24 24" fill="none"><path d="M1.1 1.1 H22.5 L12.0 11.8 L22.5 22.5 H1.1 Z" stroke="#b589ec" stroke-width="2.2" fill="#2f2936" stroke-linejoin="round"/></svg>
<span style="left:375.7px;top:1049.3px;font-size:24.4px;line-height:24.4px;color:#dfe1e5;letter-spacing:0.60px;-webkit-text-stroke:0.45px #dfe1e5;">ChatListScreen.kt</span>
<svg style="left:342.2px;top:1096px;" width="24" height="24" viewBox="0 0 24 24" fill="none"><path d="M1.1 1.1 H22.5 L12.0 11.8 L22.5 22.5 H1.1 Z" stroke="#b589ec" stroke-width="2.2" fill="#2f2936" stroke-linejoin="round"/></svg>
<span style="left:375.7px;top:1097.3px;font-size:24.4px;line-height:24.4px;color:#dfe1e5;letter-spacing:0.75px;-webkit-text-stroke:0.45px #dfe1e5;">ChatListViewModel.kt</span>
<svg style="left:269.0px;top:1148px;" width="9" height="16" viewBox="0 0 9 16" fill="none"><path d="M1.2 1.2 L7.8 8.0 L1.2 14.8" stroke="#b0b3ba" stroke-width="2.2" stroke-linecap="round" stroke-linejoin="round"/></svg>
<svg style="left:302px;top:1144px;" width="28" height="24" viewBox="0 0 28 24" fill="none"><path d="M1.1 4.1 Q1.1 1.1 4.1 1.1 H9.3 Q10.5 1.1 11.3 2 L13.9 5.1 H23.9 Q26.9 5.1 26.9 8.1 V19.9 Q26.9 22.9 23.9 22.9 H4.1 Q1.1 22.9 1.1 19.9 Z" stroke="#ced0d6" stroke-width="2.2" fill="#43454a" stroke-linejoin="round"/><circle cx="9.8" cy="14.3" r="3" stroke="#ced0d6" stroke-width="2"/></svg>
<span style="left:337.7px;top:1145.3px;font-size:24.4px;line-height:24.4px;color:#dfe1e5;letter-spacing:0.68px;-webkit-text-stroke:0.45px #dfe1e5;">login</span>
<svg style="left:264px;top:1190px;" width="34" height="34" viewBox="0 0 34 34" fill="none"><circle cx="14" cy="14" r="12.9" stroke="#548af7" stroke-width="2.2" fill="#25324d"/><path d="M18.6 9.9 A6.1 6.1 0 1 0 18.6 18.1" stroke="#548af7" stroke-width="2.2" stroke-linecap="round"/><rect x="14.2" y="14.4" width="18" height="18" fill="#2b2d30"/><g transform="translate(16.4,16.6)"><path d="M1.05 1.05 H12.35 L6.9 6.7 L12.35 12.35 H1.05 Z" stroke="#b589ec" stroke-width="2.1" fill="#2f2936" stroke-linejoin="round"/></g></svg>
<span style="left:299.7px;top:1193.3px;font-size:24.4px;line-height:24.4px;color:#dfe1e5;letter-spacing:0.40px;-webkit-text-stroke:0.45px #dfe1e5;">FCMService</span>
<svg style="left:266.2px;top:1240px;" width="24" height="24" viewBox="0 0 24 24" fill="none"><path d="M1.1 1.1 H22.5 L12.0 11.8 L22.5 22.5 H1.1 Z" stroke="#b589ec" stroke-width="2.2" fill="#2f2936" stroke-linejoin="round"/></svg>
<span style="left:299.7px;top:1241.3px;font-size:24.4px;line-height:24.4px;color:#dfe1e5;letter-spacing:0.92px;-webkit-text-stroke:0.45px #dfe1e5;">MainActivity.kt</span>
<svg style="left:264px;top:1286px;" width="34" height="34" viewBox="0 0 34 34" fill="none"><circle cx="14" cy="14" r="12.9" stroke="#548af7" stroke-width="2.2" fill="#25324d"/><path d="M18.6 9.9 A6.1 6.1 0 1 0 18.6 18.1" stroke="#548af7" stroke-width="2.2" stroke-linecap="round"/><rect x="14.2" y="14.4" width="18" height="18" fill="#2b2d30"/><g transform="translate(16.4,16.6)"><path d="M1.05 1.05 H12.35 L6.9 6.7 L12.35 12.35 H1.05 Z" stroke="#b589ec" stroke-width="2.1" fill="#2f2936" stroke-linejoin="round"/></g></svg>
<span style="left:299.7px;top:1289.3px;font-size:24.4px;line-height:24.4px;color:#dfe1e5;letter-spacing:0.73px;-webkit-text-stroke:0.45px #dfe1e5;">MainViewModel</span>
<svg style="left:193.0px;top:1340px;" width="9" height="16" viewBox="0 0 9 16" fill="none"><path d="M1.2 1.2 L7.8 8.0 L1.2 14.8" stroke="#b0b3ba" stroke-width="2.2" stroke-linecap="round" stroke-linejoin="round"/></svg>
<svg style="left:226px;top:1336px;" width="28" height="24" viewBox="0 0 28 24" fill="none"><path d="M1.1 4.1 Q1.1 1.1 4.1 1.1 H9.3 Q10.5 1.1 11.3 2 L13.9 5.1 H23.9 Q26.9 5.1 26.9 8.1 V19.9 Q26.9 22.9 23.9 22.9 H4.1 Q1.1 22.9 1.1 19.9 Z" stroke="#ced0d6" stroke-width="2.2" fill="#43454a" stroke-linejoin="round"/><circle cx="9.8" cy="14.3" r="3" stroke="#ced0d6" stroke-width="2"/></svg>
<span style="left:261.7px;top:1337.3px;font-size:24.4px;line-height:24.4px;color:#dfe1e5;letter-spacing:0.50px;-webkit-text-stroke:0.45px #dfe1e5;">com.example.rosie</span>
<span style="left:482.7px;top:1337.3px;font-size:24.4px;line-height:24.4px;color:#868a91;letter-spacing:0.80px;-webkit-text-stroke:0.45px #868a91;">(androidTest)</span>
<svg style="left:193.0px;top:1388px;" width="9" height="16" viewBox="0 0 9 16" fill="none"><path d="M1.2 1.2 L7.8 8.0 L1.2 14.8" stroke="#b0b3ba" stroke-width="2.2" stroke-linecap="round" stroke-linejoin="round"/></svg>
<svg style="left:226px;top:1384px;" width="28" height="24" viewBox="0 0 28 24" fill="none"><path d="M1.1 4.1 Q1.1 1.1 4.1 1.1 H9.3 Q10.5 1.1 11.3 2 L13.9 5.1 H23.9 Q26.9 5.1 26.9 8.1 V19.9 Q26.9 22.9 23.9 22.9 H4.1 Q1.1 22.9 1.1 19.9 Z" stroke="#ced0d6" stroke-width="2.2" fill="#43454a" stroke-linejoin="round"/><circle cx="9.8" cy="14.3" r="3" stroke="#ced0d6" stroke-width="2"/></svg>
<span style="left:261.7px;top:1385.3px;font-size:24.4px;line-height:24.4px;color:#dfe1e5;letter-spacing:0.50px;-webkit-text-stroke:0.45px #dfe1e5;">com.example.rosie</span>
<span style="left:482.7px;top:1385.3px;font-size:24.4px;line-height:24.4px;color:#868a91;letter-spacing:0.61px;-webkit-text-stroke:0.45px #868a91;">(test)</span>
<svg style="left:155.0px;top:1436px;" width="9" height="16" viewBox="0 0 9 16" fill="none"><path d="M1.2 1.2 L7.8 8.0 L1.2 14.8" stroke="#b0b3ba" stroke-width="2.2" stroke-linecap="round" stroke-linejoin="round"/></svg>
<svg style="left:188px;top:1432px;" width="32" height="30" viewBox="0 0 32 30" fill="none"><path d="M1.1 4.1 Q1.1 1.1 4.1 1.1 H9.3 Q10.5 1.1 11.3 2 L13.9 5.1 H23.9 Q26.9 5.1 26.9 8.1 V19.9 Q26.9 22.9 23.9 22.9 H4.1 Q1.1 22.9 1.1 19.9 Z" stroke="#548af7" stroke-width="2.2" fill="#25324d" stroke-linejoin="round"/><rect x="15" y="13" width="16" height="16" fill="#2b2d30"/><g stroke="#548af7" stroke-width="1.6" stroke-linecap="round"><path d="M23 16.2V27.8M17.4 22H28.6M19 18L27 26M27 18L19 26"/></g><circle cx="23" cy="22" r="2.2" fill="#2b2d30"/><circle cx="23" cy="22" r="1.2" fill="#548af7"/></svg>
<span style="left:223.7px;top:1433.3px;font-size:24.4px;line-height:24.4px;color:#dfe1e5;letter-spacing:0.37px;-webkit-text-stroke:0.45px #dfe1e5;">java</span>
<span style="left:277.6px;top:1433.3px;font-size:24.4px;line-height:24.4px;color:#868a91;letter-spacing:0.66px;-webkit-text-stroke:0.45px #868a91;">(generated)</span>
<svg style="left:155.0px;top:1484px;" width="9" height="16" viewBox="0 0 9 16" fill="none"><path d="M1.2 1.2 L7.8 8.0 L1.2 14.8" stroke="#b0b3ba" stroke-width="2.2" stroke-linecap="round" stroke-linejoin="round"/></svg>
<svg style="left:188px;top:1480px;" width="32" height="30" viewBox="0 0 32 30" fill="none"><path d="M1.1 4.1 Q1.1 1.1 4.1 1.1 H9.3 Q10.5 1.1 11.3 2 L13.9 5.1 H23.9 Q26.9 5.1 26.9 8.1 V19.9 Q26.9 22.9 23.9 22.9 H4.1 Q1.1 22.9 1.1 19.9 Z" stroke="#ced0d6" stroke-width="2.2" fill="#43454a" stroke-linejoin="round"/><rect x="15" y="13.5" width="16" height="16" fill="#2b2d30"/><g stroke="#e4bb5e" stroke-width="2" ><path d="M17.5 17.4H31M17.5 21.8H31M17.5 26.2H31"/></g></svg>
<span style="left:223.7px;top:1481.3px;font-size:24.4px;line-height:24.4px;color:#dfe1e5;letter-spacing:0.71px;-webkit-text-stroke:0.45px #dfe1e5;">res</span>
<svg style="left:155.0px;top:1532px;" width="9" height="16" viewBox="0 0 9 16" fill="none"><path d="M1.2 1.2 L7.8 8.0 L1.2 14.8" stroke="#b0b3ba" stroke-width="2.2" stroke-linecap="round" stroke-linejoin="round"/></svg>
<svg style="left:188px;top:1528px;" width="32" height="30" viewBox="0 0 32 30" fill="none"><path d="M1.1 4.1 Q1.1 1.1 4.1 1.1 H9.3 Q10.5 1.1 11.3 2 L13.9 5.1 H23.9 Q26.9 5.1 26.9 8.1 V19.9 Q26.9 22.9 23.9 22.9 H4.1 Q1.1 22.9 1.1 19.9 Z" stroke="#ced0d6" stroke-width="2.2" fill="#43454a" stroke-linejoin="round"/><rect x="15" y="13.5" width="16" height="16" fill="#2b2d30"/><g stroke="#e4bb5e" stroke-width="2" ><path d="M17.5 17.4H31M17.5 21.8H31M17.5 26.2H31"/></g></svg>
<span style="left:223.7px;top:1529.3px;font-size:24.4px;line-height:24.4px;color:#dfe1e5;letter-spacing:0.71px;-webkit-text-stroke:0.45px #dfe1e5;">res</span>
<span style="left:266.8px;top:1529.3px;font-size:24.4px;line-height:24.4px;color:#868a91;letter-spacing:0.66px;-webkit-text-stroke:0.45px #868a91;">(generated)</span>
<svg style="left:117.0px;top:1580px;" width="9" height="16" viewBox="0 0 9 16" fill="none"><path d="M1.2 1.2 L7.8 8.0 L1.2 14.8" stroke="#b0b3ba" stroke-width="2.2" stroke-linecap="round" stroke-linejoin="round"/></svg>
<svg style="left:149.2px;top:1571.6px;" width="36" height="32" viewBox="0 0 36 32" fill="none"><g stroke="#ced0d6" stroke-width="2.2" fill="none" stroke-linecap="round" stroke-linejoin="round"><path d="M1.19 24.73 C1.16 24.31 0.88 23.41 1.03 22.20 C1.17 20.99 1.45 18.85 2.05 17.46 C2.66 16.06 3.92 14.83 4.66 13.83 C5.40 12.82 5.95 12.26 6.48 11.46 C7.00 10.65 6.95 9.57 7.82 9.01 C8.69 8.44 10.39 8.18 11.69 8.06 C13.00 7.94 14.33 8.03 15.64 8.29 C16.96 8.56 18.29 9.11 19.59 9.64 C20.90 10.16 22.25 11.02 23.46 11.46 C24.67 11.89 25.99 12.28 26.86 12.25 C27.73 12.21 28.20 11.74 28.68 11.22 C29.15 10.69 29.59 9.88 29.70 9.09 C29.82 8.30 29.77 7.18 29.39 6.48 C29.01 5.78 28.24 4.99 27.41 4.90 C26.58 4.81 24.91 5.75 24.41 5.93"/><path d="M27.81 4.98 C28.22 5.23 29.72 5.70 30.26 6.48 C30.80 7.25 31.09 8.41 31.05 9.64 C31.01 10.86 30.63 12.60 30.02 13.83 C29.41 15.05 28.28 16.02 27.41 16.98 C26.54 17.95 25.50 18.72 24.81 19.59 C24.11 20.46 23.61 21.12 23.23 22.20 C22.84 23.28 22.63 25.42 22.52 26.07"/><path transform="scale(0.79) translate(0,0)" stroke-width="2.78" d="M28.5 33 H24.8 C24.3 30.5 22.8 29.4 20.8 29.4 C18.8 29.4 17.3 30.5 16.8 33 H13.5 C13 30.5 11.4 29.4 9.4 29.4 C7.4 29.4 5.8 30.5 5.3 33 H3 Q1.5 33 1.5 31.3"/><path d="M6.48 11.46 C6.57 12.02 6.81 13.81 7.03 14.85 C7.25 15.89 7.39 17.04 7.82 17.70 C8.26 18.35 8.90 18.80 9.64 18.80 C10.38 18.80 11.28 18.26 12.25 17.70 C13.21 17.13 14.88 15.79 15.41 15.41"/></g><circle cx="19.59" cy="14.69" r="1.26" fill="#ced0d6"/></svg>
<span style="left:185.7px;top:1577.3px;font-size:24.4px;line-height:24.4px;color:#dfe1e5;letter-spacing:0.46px;-webkit-text-stroke:0.45px #dfe1e5;">Gradle Scripts</span>
<div style="left:688px;top:162px;width:1998px;height:2px;background:#393b40;"></div>
<svg style="left:716.2px;top:112.3px;" width="24" height="24" viewBox="0 0 24 24" fill="none"><path d="M1.1 1.1 H22.5 L12.0 11.8 L22.5 22.5 H1.1 Z" stroke="#9d7bd0" stroke-width="2.2" fill="#2a2630" stroke-linejoin="round"/></svg>
<span style="left:751.6px;top:112.9px;font-size:24.4px;line-height:24.4px;color:#afb1b7;letter-spacing:0.69px;-webkit-text-stroke:0.45px #afb1b7;">ChatListScreen.kt</span>
<svg style="left:1042px;top:112.3px;" width="24" height="24" viewBox="0 0 24 24" fill="none"><path d="M1.1 1.1 H22.5 L12.0 11.8 L22.5 22.5 H1.1 Z" stroke="#9d7bd0" stroke-width="2.2" fill="#2a2630" stroke-linejoin="round"/></svg>
<span style="left:1077.5px;top:112.9px;font-size:24.4px;line-height:24.4px;color:#afb1b7;letter-spacing:0.75px;-webkit-text-stroke:0.45px #afb1b7;">ChatListViewModel.kt</span>
<svg style="left:1414.2px;top:112.3px;" width="24" height="24" viewBox="0 0 24 24" fill="none"><path d="M1.1 1.1 H22.5 L12.0 11.8 L22.5 22.5 H1.1 Z" stroke="#9d7bd0" stroke-width="2.2" fill="#2a2630" stroke-linejoin="round"/></svg>
<span style="left:1448.8px;top:112.9px;font-size:24.4px;line-height:24.4px;color:#afb1b7;letter-spacing:0.73px;-webkit-text-stroke:0.45px #afb1b7;">ChatScreen.kt</span>
<svg style="left:1695.5px;top:108.5px;" width="34" height="34" viewBox="0 0 34 34" fill="none"><circle cx="14" cy="14" r="12.9" stroke="#548af7" stroke-width="2.2" fill="#25324d"/><path d="M18.6 9.9 A6.1 6.1 0 1 0 18.6 18.1" stroke="#548af7" stroke-width="2.2" stroke-linecap="round"/><rect x="14.2" y="14.4" width="18" height="18" fill="#1e1f22"/><g transform="translate(16.4,16.6)"><path d="M1.05 1.05 H12.35 L6.9 6.7 L12.35 12.35 H1.05 Z" stroke="#b589ec" stroke-width="2.1" fill="#2f2936" stroke-linejoin="round"/></g></svg>
<span style="left:1733.2px;top:112.9px;font-size:24.4px;line-height:24.4px;color:#dfe1e5;letter-spacing:0.85px;-webkit-text-stroke:0.45px #dfe1e5;">ChatViewModel.kt</span>
<svg style="left:1962px;top:116.5px;" width="16" height="16" viewBox="0 0 16 16" fill="none"><path d="M1.2 1.2 L14.8 14.8 M14.8 1.2 L1.2 14.8" stroke="#868a91" stroke-width="2" stroke-linecap="round"/></svg>
<div style="left:1670px;top:158px;width:332px;height:6px;background:#4673e8;border-radius:3px;"></div>
<svg style="left:2525px;top:110px;" width="32" height="26" viewBox="0 0 32 26" fill="none"><g stroke="#ced0d6" stroke-width="2.2" stroke-linecap="round" fill="none"><path d="M2 3.4 H10.6 M2 9.6 H10.6 M2 15.8 H10.6 M2 22 H10.6"/><rect x="16.2" y="2.2" width="11.8" height="21" rx="3"/></g></svg>
<div style="left:2566px;top:108px;width:2px;height:28px;background:#43454a;"></div>
<svg style="left:2586px;top:117.4px;" width="16" height="9.5" viewBox="0 0 16 9.5" fill="none"><path d="M1.2 1.2 L8.0 8.3 L14.8 1.2" stroke="#ced0d6" stroke-width="2.2" stroke-linecap="round" stroke-linejoin="round"/></svg>
<svg style="left:2643px;top:110px;" width="6" height="25" viewBox="0 0 6 25" fill="none"><circle cx="3" cy="2.6" r="2.4" fill="#ced0d6"/><circle cx="3" cy="12.5" r="2.4" fill="#ced0d6"/><circle cx="3" cy="22.4" r="2.4" fill="#ced0d6"/></svg>
<div style="left:688px;top:498px;width:1998px;height:42px;background:#2a2c30;"></div>
<div style="left:968px;top:498px;width:70px;height:42px;background:#3a3c3f;"></div>
<div style="left:836.3px;top:164px;width:2px;height:1878px;background:#34363a;"></div>
<div style="left:2242px;top:164px;width:2px;height:1878px;background:#34363a;"></div>
<div style="left:2666px;top:474px;width:14.2px;height:1247px;background:rgba(255,255,255,0.135);border-radius:7.1px;"></div>
<div style="left:2658px;top:692px;width:28px;height:4px;background:#7c765f;"></div>
<span style="left:736.6px;top:174.4px;font-size:22px;line-height:22px;font-family:'DejaVu Sans Mono','Liberation Mono',monospace;letter-spacing:-0.05px;color:#555962;">20</span>
<div class="code" style="left:842px;top:162.8px;height:42px;line-height:42px;font-size:23.6px;letter-spacing:-0.208px;"><span style="color:#a9b7c6;">) : ViewModel() {</span></div>
<span style="left:736.6px;top:216.4px;font-size:22px;line-height:22px;font-family:'DejaVu Sans Mono','Liberation Mono',monospace;letter-spacing:-0.05px;color:#555962;">21</span>
<div class="code" style="left:842px;top:204.8px;height:42px;line-height:42px;font-size:23.6px;letter-spacing:-0.208px;"><span style="color:#a9b7c6;">    </span><span style="color:#c48245;">private val </span><span style="color:#9876aa;">_chatUserInfo</span><span style="color:#a9b7c6;"> = </span><span style="color:#a9b7c6;font-style:italic;">mutableStateListOf</span><span style="color:#a9b7c6;">&lt;ChatUserInfo&gt;()</span></div>
<span style="left:736.6px;top:258.4px;font-size:22px;line-height:22px;font-family:'DejaVu Sans Mono','Liberation Mono',monospace;letter-spacing:-0.05px;color:#555962;">22</span>
<div class="code" style="left:842px;top:246.8px;height:42px;line-height:42px;font-size:23.6px;letter-spacing:-0.208px;"><span style="color:#a9b7c6;">    </span><span style="color:#c48245;">val </span><span style="color:#9876aa;">chatUserInfo</span><span style="color:#a9b7c6;"> = </span><span style="color:#9876aa;">_chatUserInfo</span></div>
<span style="left:736.6px;top:300.4px;font-size:22px;line-height:22px;font-family:'DejaVu Sans Mono','Liberation Mono',monospace;letter-spacing:-0.05px;color:#555962;">23</span>
<span style="left:736.6px;top:342.4px;font-size:22px;line-height:22px;font-family:'DejaVu Sans Mono','Liberation Mono',monospace;letter-spacing:-0.05px;color:#555962;">24</span>
<div class="code" style="left:842px;top:330.8px;height:42px;line-height:42px;font-size:23.6px;letter-spacing:-0.208px;"><span style="color:#a9b7c6;">    </span><span style="color:#c48245;">private val </span><span style="color:#9876aa;">_chatRosieInfo</span><span style="color:#a9b7c6;"> = </span><span style="color:#a9b7c6;font-style:italic;">mutableStateListOf</span><span style="color:#a9b7c6;">&lt;ChatRosieInfo&gt;()</span></div>
<span style="left:736.6px;top:384.4px;font-size:22px;line-height:22px;font-family:'DejaVu Sans Mono','Liberation Mono',monospace;letter-spacing:-0.05px;color:#555962;">25</span>
<div class="code" style="left:842px;top:372.8px;height:42px;line-height:42px;font-size:23.6px;letter-spacing:-0.208px;"><span style="color:#a9b7c6;">    </span><span style="color:#c48245;">val </span><span style="color:#9876aa;">chatRosieInfo</span><span style="color:#a9b7c6;"> = </span><span style="color:#9876aa;">_chatRosieInfo</span></div>
<span style="left:736.6px;top:426.4px;font-size:22px;line-height:22px;font-family:'DejaVu Sans Mono','Liberation Mono',monospace;letter-spacing:-0.05px;color:#555962;">26</span>
<svg style="left:902px;top:471.4px;top:471.4px;" width="15" height="15" viewBox="0 0 15 15" fill="none"><circle cx="7.4" cy="4.4" r="3.3" fill="#76808c"/><path d="M0.8 14 C0.8 10.2 3.8 9 7.4 9 C11 9 14 10.2 14 14 Z" fill="#76808c"/></svg>
<span style="left:924.3px;top:467.5px;font-size:21.8px;line-height:21.8px;color:#7d8085;letter-spacing:0.82px;-webkit-text-stroke:0.3px #7d8085;">JammyDevs</span>
<svg style="left:859px;top:466px;" width="22" height="31" viewBox="0 0 22 31" fill="none"><path d="M11 1 C5.2 1 1.2 5.2 1.2 10.6 C1.2 14.6 3.4 17 5.2 19 C6.2 20.2 6.6 21.4 6.6 22.6 H15.4 C15.4 21.4 15.8 20.2 16.8 19 C18.6 17 20.8 14.6 20.8 10.6 C20.8 5.2 16.8 1 11 1 Z" fill="#ecc765"/><path d="M6.6 25.4 H15.4 M7.4 28.8 H14.6" stroke="#dcdde0" stroke-width="2"/></svg>
<span style="left:736.6px;top:510.4px;font-size:22px;line-height:22px;font-family:'DejaVu Sans Mono','Liberation Mono',monospace;letter-spacing:-0.05px;color:#b8bac0;">27</span>
<div class="code" style="left:842px;top:498.8px;height:42px;line-height:42px;font-size:23.6px;letter-spacing:-0.208px;"><span style="color:#a9b7c6;">    </span><span style="color:#c48245;">init </span><span style="color:#9da0a6;">{...}</span></div>
<svg style="left:816.5px;top:511.5px;" width="10" height="16" viewBox="0 0 10 16" fill="none"><path d="M1.2 1.2 L8.8 8.0 L1.2 14.8" stroke="#7a7d84" stroke-width="2" stroke-linecap="round" stroke-linejoin="round"/></svg>
<span style="left:736.6px;top:552.4px;font-size:22px;line-height:22px;font-family:'DejaVu Sans Mono','Liberation Mono',monospace;letter-spacing:-0.05px;color:#555962;">69</span>
<span style="left:736.6px;top:594.4px;font-size:22px;line-height:22px;font-family:'DejaVu Sans Mono','Liberation Mono',monospace;letter-spacing:-0.05px;color:#555962;">70</span>
<div class="code" style="left:842px;top:582.8px;height:42px;line-height:42px;font-size:23.6px;letter-spacing:-0.208px;"><span style="color:#7a7e85;">   // chatMessage getter</span></div>
<span style="left:736.6px;top:636.4px;font-size:22px;line-height:22px;font-family:'DejaVu Sans Mono','Liberation Mono',monospace;letter-spacing:-0.05px;color:#555962;">71</span>
<div class="code" style="left:842px;top:624.8px;height:42px;line-height:42px;font-size:23.6px;letter-spacing:-0.208px;"><span style="color:#7a7e85;">//    private val _chatMessage = mutableStateOf(&quot;&quot;)</span></div>
<span style="left:736.6px;top:678.4px;font-size:22px;line-height:22px;font-family:'DejaVu Sans Mono','Liberation Mono',monospace;letter-spacing:-0.05px;color:#555962;">72</span>
<div class="code" style="left:842px;top:666.8px;height:42px;line-height:42px;font-size:23.6px;letter-spacing:-0.208px;"><span style="color:#7a7e85;">//    val chatMessage = _chatMessage</span></div>
<span style="left:736.6px;top:720.4px;font-size:22px;line-height:22px;font-family:'DejaVu Sans Mono','Liberation Mono',monospace;letter-spacing:-0.05px;color:#555962;">73</span>
<span style="left:736.6px;top:762.4px;font-size:22px;line-height:22px;font-family:'DejaVu Sans Mono','Liberation Mono',monospace;letter-spacing:-0.05px;color:#555962;">74</span>
<div class="code" style="left:842px;top:750.8px;height:42px;line-height:42px;font-size:23.6px;letter-spacing:-0.208px;"><span style="color:#7a7e85;">//    fun setChatMessage(text: String){</span></div>
<span style="left:736.6px;top:804.4px;font-size:22px;line-height:22px;font-family:'DejaVu Sans Mono','Liberation Mono',monospace;letter-spacing:-0.05px;color:#555962;">75</span>
<div class="code" style="left:842px;top:792.8px;height:42px;line-height:42px;font-size:23.6px;letter-spacing:-0.208px;"><span style="color:#7a7e85;">//        _chatMessage.value = text</span></div>
<span style="left:736.6px;top:846.4px;font-size:22px;line-height:22px;font-family:'DejaVu Sans Mono','Liberation Mono',monospace;letter-spacing:-0.05px;color:#555962;">76</span>
<div class="code" style="left:842px;top:834.8px;height:42px;line-height:42px;font-size:23.6px;letter-spacing:-0.208px;"><span style="color:#7a7e85;">//    }</span></div>
<span style="left:736.6px;top:888.4px;font-size:22px;line-height:22px;font-family:'DejaVu Sans Mono','Liberation Mono',monospace;letter-spacing:-0.05px;color:#555962;">77</span>
<span style="left:736.6px;top:930.4px;font-size:22px;line-height:22px;font-family:'DejaVu Sans Mono','Liberation Mono',monospace;letter-spacing:-0.05px;color:#555962;">78</span>
<div class="code" style="left:842px;top:918.8px;height:42px;line-height:42px;font-size:23.6px;letter-spacing:-0.208px;"><span style="color:#7a7e85;">    // list to store messages</span></div>
<span style="left:736.6px;top:972.4px;font-size:22px;line-height:22px;font-family:'DejaVu Sans Mono','Liberation Mono',monospace;letter-spacing:-0.05px;color:#555962;">79</span>
<div class="code" style="left:842px;top:960.8px;height:42px;line-height:42px;font-size:23.6px;letter-spacing:-0.208px;"><span style="color:#a9b7c6;">    </span><span style="color:#c48245;">private val </span><span style="color:#9876aa;">_chatMessages</span><span style="color:#a9b7c6;"> = </span><span style="color:#a9b7c6;font-style:italic;">mutableStateListOf</span><span style="color:#a9b7c6;">&lt;String&gt;()</span></div>
<span style="left:736.6px;top:1014.4px;font-size:22px;line-height:22px;font-family:'DejaVu Sans Mono','Liberation Mono',monospace;letter-spacing:-0.05px;color:#555962;">80</span>
<div class="code" style="left:842px;top:1002.8px;height:42px;line-height:42px;font-size:23.6px;letter-spacing:-0.208px;"><span style="color:#a9b7c6;">    </span><span style="color:#c48245;">val </span><span style="color:#72737a;">chatMessages</span><span style="color:#a9b7c6;"> = </span><span style="color:#9876aa;">_chatMessages</span></div>
<span style="left:736.6px;top:1056.4px;font-size:22px;line-height:22px;font-family:'DejaVu Sans Mono','Liberation Mono',monospace;letter-spacing:-0.05px;color:#555962;">81</span>
<span style="left:736.6px;top:1098.4px;font-size:22px;line-height:22px;font-family:'DejaVu Sans Mono','Liberation Mono',monospace;letter-spacing:-0.05px;color:#555962;">82</span>
<span style="left:736.6px;top:1140.4px;font-size:22px;line-height:22px;font-family:'DejaVu Sans Mono','Liberation Mono',monospace;letter-spacing:-0.05px;color:#555962;">83</span>
<div class="code" style="left:842px;top:1128.8px;height:42px;line-height:42px;font-size:23.6px;letter-spacing:-0.208px;"><span style="color:#7a7e85;">    // State for the current chat message</span></div>
<span style="left:736.6px;top:1182.4px;font-size:22px;line-height:22px;font-family:'DejaVu Sans Mono','Liberation Mono',monospace;letter-spacing:-0.05px;color:#555962;">84</span>
<div class="code" style="left:842px;top:1170.8px;height:42px;line-height:42px;font-size:23.6px;letter-spacing:-0.208px;"><span style="color:#a9b7c6;">    </span><span style="color:#c48245;">var </span><span style="color:#9876aa;text-decoration:underline;text-decoration-thickness:1.5px;text-underline-offset:3.5px;">chatMessage</span><span style="color:#a9b7c6;"> </span><span style="color:#c48245;">by </span><span style="color:#a9b7c6;font-style:italic;">mutableStateOf</span><span style="color:#a9b7c6;">(</span></div>
<div style="left:1378px;top:1174px;width:80px;height:34px;background:#303134;border-radius:7px;"></div>
<span style="left:1389.5px;top:1181.7px;font-size:21px;line-height:21px;color:#808287;letter-spacing:0.28px;-webkit-text-stroke:0.25px #808287;">value:</span>
<div class="code" style="left:1462px;top:1170.8px;height:42px;line-height:42px;font-size:23.6px;letter-spacing:-0.208px;"><span style="color:#6a8759">""</span><span style="color:#a9b7c6">)</span></div>
<span style="left:736.6px;top:1224.4px;font-size:22px;line-height:22px;font-family:'DejaVu Sans Mono','Liberation Mono',monospace;letter-spacing:-0.05px;color:#555962;">85</span>
<svg style="left:902px;top:471.4px;top:1269.4px;" width="15" height="15" viewBox="0 0 15 15" fill="none"><circle cx="7.4" cy="4.4" r="3.3" fill="#76808c"/><path d="M0.8 14 C0.8 10.2 3.8 9 7.4 9 C11 9 14 10.2 14 14 Z" fill="#76808c"/></svg>
<span style="left:924.3px;top:1265.5px;font-size:21.8px;line-height:21.8px;color:#7d8085;letter-spacing:0.82px;-webkit-text-stroke:0.3px #7d8085;">JammyDevs</span>
<span style="left:736.6px;top:1308.4px;font-size:22px;line-height:22px;font-family:'DejaVu Sans Mono','Liberation Mono',monospace;letter-spacing:-0.05px;color:#555962;">86</span>
<div class="code" style="left:842px;top:1296.8px;height:42px;line-height:42px;font-size:23.6px;letter-spacing:-0.208px;"><span style="color:#a9b7c6;">    </span><span style="color:#c48245;">fun </span><span style="color:#ffc66d;">setUsersChatMessage</span><span style="color:#a9b7c6;">(message: String) {</span></div>
<span style="left:736.6px;top:1350.4px;font-size:22px;line-height:22px;font-family:'DejaVu Sans Mono','Liberation Mono',monospace;letter-spacing:-0.05px;color:#555962;">87</span>
<div class="code" style="left:842px;top:1338.8px;height:42px;line-height:42px;font-size:23.6px;letter-spacing:-0.208px;"><span style="color:#a9b7c6;">        </span><span style="color:#9876aa;text-decoration:underline;text-decoration-thickness:1.5px;text-underline-offset:3.5px;">chatMessage</span><span style="color:#a9b7c6;"> = message</span></div>
<div style="left:894px;top:1338px;width:2px;height:42px;background:#34363a;"></div>
<span style="left:736.6px;top:1392.4px;font-size:22px;line-height:22px;font-family:'DejaVu Sans Mono','Liberation Mono',monospace;letter-spacing:-0.05px;color:#555962;">88</span>
<div class="code" style="left:842px;top:1380.8px;height:42px;line-height:42px;font-size:23.6px;letter-spacing:-0.208px;"><span style="color:#a9b7c6;">    }</span></div>
<span style="left:736.6px;top:1434.4px;font-size:22px;line-height:22px;font-family:'DejaVu Sans Mono','Liberation Mono',monospace;letter-spacing:-0.05px;color:#555962;">89</span>
<svg style="left:902px;top:471.4px;top:1479.4px;" width="15" height="15" viewBox="0 0 15 15" fill="none"><circle cx="7.4" cy="4.4" r="3.3" fill="#76808c"/><path d="M0.8 14 C0.8 10.2 3.8 9 7.4 9 C11 9 14 10.2 14 14 Z" fill="#76808c"/></svg>
<span style="left:924.3px;top:1475.5px;font-size:21.8px;line-height:21.8px;color:#7d8085;letter-spacing:0.82px;-webkit-text-stroke:0.3px #7d8085;">JammyDevs</span>
<span style="left:736.6px;top:1518.4px;font-size:22px;line-height:22px;font-family:'DejaVu Sans Mono','Liberation Mono',monospace;letter-spacing:-0.05px;color:#555962;">90</span>
<div class="code" style="left:842px;top:1506.8px;height:42px;line-height:42px;font-size:23.6px;letter-spacing:-0.208px;"><span style="color:#a9b7c6;">    </span><span style="color:#c48245;">fun </span><span style="color:#ffc66d;">addMessageToChat</span><span style="color:#a9b7c6;">() {</span></div>
<span style="left:736.6px;top:1560.4px;font-size:22px;line-height:22px;font-family:'DejaVu Sans Mono','Liberation Mono',monospace;letter-spacing:-0.05px;color:#555962;">91</span>
<div class="code" style="left:842px;top:1548.8px;height:42px;line-height:42px;font-size:23.6px;letter-spacing:-0.208px;"><span style="color:#a9b7c6;">        </span><span style="color:#c48245;">if </span><span style="color:#a9b7c6;">(</span><span style="color:#9876aa;text-decoration:underline;text-decoration-thickness:1.5px;text-underline-offset:3.5px;">chatMessage</span><span style="color:#a9b7c6;">.</span><span style="color:#ffc66d;font-style:italic;">isNotEmpty</span><span style="color:#a9b7c6;">()) {</span></div>
<div style="left:894px;top:1548px;width:2px;height:126px;background:#34363a;"></div>
<span style="left:736.6px;top:1602.4px;font-size:22px;line-height:22px;font-family:'DejaVu Sans Mono','Liberation Mono',monospace;letter-spacing:-0.05px;color:#555962;">92</span>
<div class="code" style="left:842px;top:1590.8px;height:42px;line-height:42px;font-size:23.6px;letter-spacing:-0.208px;"><span style="color:#a9b7c6;">            </span><span style="color:#9876aa;">_chatMessages</span><span style="color:#a9b7c6;">.add(</span><span style="color:#9876aa;text-decoration:underline;text-decoration-thickness:1.5px;text-underline-offset:3.5px;">chatMessage</span><span style="color:#a9b7c6;">)</span></div>
<div style="left:950px;top:1590px;width:2px;height:42px;background:#34363a;"></div>
<span style="left:736.6px;top:1644.4px;font-size:22px;line-height:22px;font-family:'DejaVu Sans Mono','Liberation Mono',monospace;letter-spacing:-0.05px;color:#555962;">93</span>
<div class="code" style="left:842px;top:1632.8px;height:42px;line-height:42px;font-size:23.6px;letter-spacing:-0.208px;"><span style="color:#a9b7c6;">        }</span></div>
<span style="left:736.6px;top:1686.4px;font-size:22px;line-height:22px;font-family:'DejaVu Sans Mono','Liberation Mono',monospace;letter-spacing:-0.05px;color:#555962;">94</span>
<div class="code" style="left:842px;top:1674.8px;height:42px;line-height:42px;font-size:23.6px;letter-spacing:-0.208px;"><span style="color:#a9b7c6;">    }</span></div>
<span style="left:736.6px;top:1728.4px;font-size:22px;line-height:22px;font-family:'DejaVu Sans Mono','Liberation Mono',monospace;letter-spacing:-0.05px;color:#555962;">95</span>
<svg style="left:902px;top:471.4px;top:1773.4px;" width="15" height="15" viewBox="0 0 15 15" fill="none"><circle cx="7.4" cy="4.4" r="3.3" fill="#76808c"/><path d="M0.8 14 C0.8 10.2 3.8 9 7.4 9 C11 9 14 10.2 14 14 Z" fill="#76808c"/></svg>
<span style="left:924.3px;top:1769.5px;font-size:21.8px;line-height:21.8px;color:#7d8085;letter-spacing:0.82px;-webkit-text-stroke:0.3px #7d8085;">JammyDevs</span>
<span style="left:736.6px;top:1812.4px;font-size:22px;line-height:22px;font-family:'DejaVu Sans Mono','Liberation Mono',monospace;letter-spacing:-0.05px;color:#555962;">96</span>
<div class="code" style="left:842px;top:1800.8px;height:42px;line-height:42px;font-size:23.6px;letter-spacing:-0.208px;"><span style="color:#a9b7c6;">    </span><span style="color:#c48245;">fun </span><span style="color:#ffc66d;">clearChatMessage</span><span style="color:#a9b7c6;">() {</span></div>
<span style="left:736.6px;top:1854.4px;font-size:22px;line-height:22px;font-family:'DejaVu Sans Mono','Liberation Mono',monospace;letter-spacing:-0.05px;color:#555962;">97</span>
<div class="code" style="left:842px;top:1842.8px;height:42px;line-height:42px;font-size:23.6px;letter-spacing:-0.208px;"><span style="color:#a9b7c6;">        </span><span style="color:#9876aa;text-decoration:underline;text-decoration-thickness:1.5px;text-underline-offset:3.5px;">chatMessage</span><span style="color:#a9b7c6;"> = </span><span style="color:#6a8759;">&quot;&quot;</span></div>
<div style="left:894px;top:1842px;width:2px;height:42px;background:#34363a;"></div>
<span style="left:736.6px;top:1896.4px;font-size:22px;line-height:22px;font-family:'DejaVu Sans Mono','Liberation Mono',monospace;letter-spacing:-0.05px;color:#555962;">98</span>
<div class="code" style="left:842px;top:1884.8px;height:42px;line-height:42px;font-size:23.6px;letter-spacing:-0.208px;"><span style="color:#a9b7c6;">    }</span></div>
<span style="left:736.6px;top:1938.4px;font-size:22px;line-height:22px;font-family:'DejaVu Sans Mono','Liberation Mono',monospace;letter-spacing:-0.05px;color:#555962;">99</span>
<span style="left:723.4px;top:1980.4px;font-size:22px;line-height:22px;font-family:'DejaVu Sans Mono','Liberation Mono',monospace;letter-spacing:-0.05px;color:#555962;">100</span>
<div class="code" style="left:842px;top:1968.8px;height:42px;line-height:42px;font-size:23.6px;letter-spacing:-0.208px;"><span style="color:#7a7e85;">    // Add a function to get the list of messages</span></div>
<svg style="left:902px;top:471.4px;top:2025.4px;" width="15" height="15" viewBox="0 0 15 15" fill="none"><circle cx="7.4" cy="4.4" r="3.3" fill="#76808c"/><path d="M0.8 14 C0.8 10.2 3.8 9 7.4 9 C11 9 14 10.2 14 14 Z" fill="#76808c"/></svg>
<span style="left:924.3px;top:2021.5px;font-size:21.8px;line-height:21.8px;color:#7d8085;letter-spacing:0.56px;-webkit-text-stroke:0.3px #7d8085;">JammyDevs +1</span>
<svg style="left:2489.7px;top:177.5px;" width="25" height="23" viewBox="0 0 25 23" fill="none"><path d="M12.5 1.5 L23.8 21.5 H1.2 Z" fill="#c29e35" stroke="#c29e35" stroke-width="1.6" stroke-linejoin="round"/><rect x="10.7" y="7.6" width="3.6" height="7.6" fill="#1e1f22"/><rect x="10.7" y="16.8" width="3.6" height="3.4" fill="#1e1f22"/></svg>
<span style="left:2519.4px;top:179.3px;font-size:22.5px;line-height:22.5px;color:#b4b6bc;letter-spacing:1.04px;-webkit-text-stroke:0.45px #b4b6bc;">3</span>
<svg style="left:2547.7px;top:177.5px;" width="25" height="23" viewBox="0 0 25 23" fill="none"><path d="M12.5 1.5 L23.8 21.5 H1.2 Z" fill="#6f6956" stroke="#6f6956" stroke-width="1.6" stroke-linejoin="round"/><rect x="10.7" y="7.6" width="3.6" height="7.6" fill="#1e1f22"/><rect x="10.7" y="16.8" width="3.6" height="3.4" fill="#1e1f22"/></svg>
<span style="left:2577.3px;top:179.3px;font-size:22.5px;line-height:22.5px;color:#b4b6bc;letter-spacing:0.74px;-webkit-text-stroke:0.45px #b4b6bc;">6</span>
<svg style="left:2612px;top:186px;" width="16" height="9.5" viewBox="0 0 16 9.5" fill="none"><path d="M1.2 8.3 L8.0 1.2 L14.8 8.3" stroke="#b4b6bc" stroke-width="2.2" stroke-linecap="round" stroke-linejoin="round"/></svg>
<svg style="left:2653.8px;top:186px;" width="16" height="9.5" viewBox="0 0 16 9.5" fill="none"><path d="M1.2 1.2 L8.0 8.3 L14.8 1.2" stroke="#b4b6bc" stroke-width="2.2" stroke-linecap="round" stroke-linejoin="round"/></svg>
<span style="left:2710.9px;top:110.8px;font-size:25.5px;line-height:25.5px;color:#dfe1e5;font-weight:700;letter-spacing:-0.72px;-webkit-text-stroke:0.225px #dfe1e5;">Running Devices</span>
<svg style="left:2966px;top:108px;" width="30" height="32" viewBox="0 0 30 32" fill="none"><g stroke-width="2.3" fill="none" stroke-linecap="round"><path d="M16.85 11.6 V5 Q16.85 3 14.85 3 H5 Q3 3 3 5 V22.85 Q3 24.85 5 24.85 H8" stroke="#ced0d6"/><path d="M8.2 7.1 H12.2" stroke="#ced0d6" stroke-width="2"/><rect x="11.15" y="15.15" width="13.7" height="7.7" rx="2" stroke="#b07cf5"/><path d="M10.2 27 H22" stroke="#b07cf5"/></g><circle cx="24.2" cy="26.1" r="5.3" fill="#2b2d30"/><circle cx="24.2" cy="26.1" r="3.9" fill="#62e04a"/></svg>
<span style="left:3002.2px;top:111.6px;font-size:24.6px;line-height:24.6px;color:#dfe1e5;letter-spacing:0.03px;-webkit-text-stroke:0.45px #dfe1e5;">Pixel 7</span>
<div style="left:2938px;top:158px;width:144px;height:6px;background:#5a5d63;border-radius:3px;"></div>
<svg style="left:2714px;top:181.1px;" width="28" height="28" viewBox="0 0 28 28" fill="none"><g stroke="#ced0d6" stroke-width="2.1" fill="none" stroke-linecap="round"><path d="M21.42 6.21 A11.2 11.2 0 1 1 6.58 6.21"/><path d="M14 4.4 V14.4"/></g></svg>
<svg style="left:2765.6px;top:184px;" width="30" height="24" viewBox="0 0 30 24" fill="none"><g stroke="#ced0d6" stroke-width="2.1" fill="none" stroke-linejoin="miter" stroke-linecap="round"><path d="M1.1 8.4 H9 L14.3 1.8 V21.6 L9 15.7 H1.1 Z"/><path d="M17.8 6.7 C20.4 9 20.4 14.4 17.8 17"/><path d="M20.9 1.2 C27.8 6 27.8 17 20.9 21.6"/></g></svg>
<svg style="left:2817.2px;top:184px;" width="30" height="24" viewBox="0 0 30 24" fill="none"><g stroke="#ced0d6" stroke-width="2.1" fill="none" stroke-linejoin="miter" stroke-linecap="round"><path d="M1.1 8.4 H9 L14.3 1.8 V21.6 L9 15.7 H1.1 Z"/><path d="M17.8 6.7 C20.4 9 20.4 14.4 17.8 17"/></g></svg>
<svg style="left:2869px;top:183px;" width="30" height="26" viewBox="0 0 30 26" fill="none"><g fill="none" stroke-linecap="round" stroke-linejoin="round"><rect x="1.1" y="1.2" width="14.6" height="22.4" rx="2.2" stroke="#ced0d6" stroke-width="2.1"/><path d="M6.8 5.8 H10.6" stroke="#ced0d6" stroke-width="2"/><path d="M19.4 23.6 C25.4 22.6 28.6 17.6 28.6 13 C28.6 8 25.6 3.4 20.6 1.6" stroke="#548af7" stroke-width="2.1"/><path d="M26.4 1.4 H19.4 V8.2" stroke="#548af7" stroke-width="2.1"/></g></svg>
<svg style="left:2921.2px;top:183px;" width="30" height="26" viewBox="0 0 30 26" fill="none"><g transform="translate(30,0) scale(-1,1)"><g fill="none" stroke-linecap="round" stroke-linejoin="round"><rect x="1.1" y="1.2" width="14.6" height="22.4" rx="2.2" stroke="#ced0d6" stroke-width="2.1"/><path d="M6.8 5.8 H10.6" stroke="#ced0d6" stroke-width="2"/><path d="M19.4 23.6 C25.4 22.6 28.6 17.6 28.6 13 C28.6 8 25.6 3.4 20.6 1.6" stroke="#548af7" stroke-width="2.1"/><path d="M26.4 1.4 H19.4 V8.2" stroke="#548af7" stroke-width="2.1"/></g></g></svg>
<svg style="left:3014.5px;top:187.5px;" width="10" height="17" viewBox="0 0 10 17" fill="none"><path d="M1.2 1.2 L8.8 8.5 L1.2 15.8" stroke="#b4b8bf" stroke-width="2.2" stroke-linecap="round" stroke-linejoin="round"/></svg>
<span style="left:3071.7px;top:183.3px;font-size:24.5px;line-height:24.5px;color:#dfe1e5;letter-spacing:0.31px;-webkit-text-stroke:0.45px #dfe1e5;">Up-to-date</span>
<svg style="left:3198px;top:185.5px;" width="24" height="19" viewBox="0 0 24 19" fill="none"><path d="M2 9.8 L8.6 16.4 L22 2.6" stroke="#5fa85c" stroke-width="4.2" fill="none" stroke-linejoin="miter"/></svg>
<svg style="left:3300px;top:102px;" width="44" height="40" viewBox="0 0 44 40" fill="none"><g stroke="#ced0d6" stroke-width="2.7" fill="none" stroke-linecap="round" stroke-linejoin="round"><path d="M5.4 30.3 H34.6 L31 25 C30 23.4 29.6 21.6 29.6 19.6 V13.4 C29.6 7.4 25.6 3.6 20 3.6 C14.4 3.6 10.4 7.4 10.4 13.4 V19.6 C10.4 21.6 10 23.4 9 25 Z"/></g><path d="M15.4 34 H24.6 C24 36.4 22.2 37.4 20 37.4 C17.8 37.4 16 36.4 15.4 34 Z" fill="#ced0d6"/><circle cx="32.9" cy="7.1" r="9.2" fill="#2b2d30"/><circle cx="32.9" cy="7.1" r="7.1" fill="#588cf0"/></svg>
<svg style="left:3300px;top:182px;" width="42" height="40" viewBox="0 0 42 40" fill="none"><g stroke="#ced0d6" stroke-width="2.8" fill="none" stroke-linecap="round" stroke-linejoin="round"><path d="M1.50 31.30 C1.47 30.77 1.12 29.63 1.30 28.10 C1.48 26.57 1.83 23.87 2.60 22.10 C3.37 20.33 4.97 18.77 5.90 17.50 C6.83 16.23 7.53 15.52 8.20 14.50 C8.87 13.48 8.80 12.12 9.90 11.40 C11.00 10.68 13.15 10.35 14.80 10.20 C16.45 10.05 18.13 10.17 19.80 10.50 C21.47 10.83 23.15 11.53 24.80 12.20 C26.45 12.87 28.17 13.95 29.70 14.50 C31.23 15.05 32.90 15.55 34.00 15.50 C35.10 15.45 35.70 14.87 36.30 14.20 C36.90 13.53 37.45 12.50 37.60 11.50 C37.75 10.50 37.68 9.08 37.20 8.20 C36.72 7.32 35.75 6.32 34.70 6.20 C33.65 6.08 31.53 7.28 30.90 7.50"/><path d="M35.20 6.30 C35.72 6.62 37.62 7.22 38.30 8.20 C38.98 9.18 39.35 10.65 39.30 12.20 C39.25 13.75 38.77 15.95 38.00 17.50 C37.23 19.05 35.80 20.28 34.70 21.50 C33.60 22.72 32.28 23.70 31.40 24.80 C30.52 25.90 29.88 26.73 29.40 28.10 C28.92 29.47 28.65 32.18 28.50 33.00"/><path transform="scale(1.0) translate(0,0)" stroke-width="2.80" d="M28.5 33 H24.8 C24.3 30.5 22.8 29.4 20.8 29.4 C18.8 29.4 17.3 30.5 16.8 33 H13.5 C13 30.5 11.4 29.4 9.4 29.4 C7.4 29.4 5.8 30.5 5.3 33 H3 Q1.5 33 1.5 31.3"/><path d="M8.20 14.50 C8.32 15.22 8.62 17.48 8.90 18.80 C9.18 20.12 9.35 21.57 9.90 22.40 C10.45 23.23 11.27 23.80 12.20 23.80 C13.13 23.80 14.28 23.12 15.50 22.40 C16.72 21.68 18.83 19.98 19.50 19.50"/></g><circle cx="24.80" cy="18.60" r="1.60" fill="#ced0d6"/></svg>
<svg style="left:3302px;top:265px;" width="40" height="36" viewBox="0 0 40 36" fill="none"><g stroke="#ced0d6" stroke-width="2.7" fill="none" stroke-linecap="round" stroke-linejoin="round"><path d="M22.2 16 V6.2 Q22.2 3.2 19.2 3.2 H6.4 Q3.4 3.2 3.4 6.2 V28.6 Q3.4 31.6 6.4 31.6 H9"/><path d="M11.4 8.6 H14.6"/><path d="M13.4 32.6 C13.4 26.4 18 22.8 24.2 22.8 C30.4 22.8 35 26.4 35 32.6 Z"/><path d="M16.6 18.6 L19.2 23.2 M31.8 18.6 L29.2 23.2"/></g></svg>
<div style="left:3290px;top:332px;width:60px;height:60px;background:#4a4c51;border-radius:12px;"></div>
<svg style="left:3303px;top:343px;" width="40" height="42" viewBox="0 0 40 42" fill="none"><g stroke="#d6d8dd" stroke-width="2.5" fill="none" stroke-linecap="round" stroke-linejoin="round"><path d="M23.4 18 V6 Q23.4 3.2 20.6 3.2 H6.5 Q3.7 3.2 3.7 6 V32.4 Q3.7 35.2 6.5 35.2 H11"/><path d="M10.4 8.4 H16.2"/><rect x="16.6" y="23.6" width="16" height="9.8" rx="1.6"/><path d="M15.6 37.6 H28"/></g><circle cx="32.7" cy="34.7" r="6" fill="#4a4c51"/><circle cx="32.7" cy="34.7" r="4.5" fill="#62e04a"/></svg>
<div style="left:3190.5px;top:1786px;width:51.4px;height:211.4px;border:2px solid #46474a;border-radius:8px;"></div>
<svg style="left:3203.6px;top:1801.2px;" width="27" height="27" viewBox="0 0 27 27" fill="none"><path d="M13.5 0.5 V26.5 M0.5 13.5 H26.5" stroke="#d3d5da" stroke-width="2.2"/></svg>
<div style="left:3204px;top:1865.7px;width:26px;height:2px;background:#5e6065;"></div>
<span style="left:3204.5px;top:1910.6px;font-size:20px;line-height:20px;color:#b9bbc1;font-weight:700;letter-spacing:-1.30px;-webkit-text-stroke:0.225px #b9bbc1;">1:1</span>
<svg style="left:3203.5px;top:1959.5px;" width="30" height="26" viewBox="0 0 30 26" fill="none"><g stroke="#5e6065" stroke-width="2" fill="none"><rect x="1.8" y="1.8" width="25.6" height="21.6" rx="3.5"/><path d="M7.6 14 V7.2 H14.4 M22.4 11 V17.8 H15.4"/></g></svg>
<div style="left:3271px;top:919px;width:5.7px;height:76.5px;background:#666768;border-radius:2.5px;"></div>
<div style="left:3271px;top:1072px;width:5.7px;height:152.5px;background:#666768;border-radius:2.5px;"></div>
<div style="left:2688px;top:512px;width:584px;height:1245.5px;border-radius:53.0px 53.0px 53.0px 53.0px / 53.0px 53.0px 53.0px 53.0px;background:linear-gradient(180deg,#4c4c4c 0,#4c4c4c 0.3%,#585858 1%,#585858 98.6%,#7a7a7a 99.3%,#505050 100%);"></div>
<div style="left:2690.6px;top:515px;width:579.1px;height:1233.9px;border-radius:50.4px 50.4px 50.4px 50.4px / 50.0px 50.0px 44.4px 44.4px;background:#0b0b0b;"></div>
<div style="left:2693.0px;top:515.4px;width:575.6px;height:1232.3px;border-radius:48.0px 48.0px 48.0px 48.0px / 49.6px 49.6px 43.2px 43.2px;background:linear-gradient(180deg,#929292 0,#8a8a8a 4px,rgba(110,110,110,0) 7px),linear-gradient(90deg,#cfcfcf 0,#a0a0a0 0.5%,#5a5a5a 1.2%,#5a5a5a 98.75%,#8e8e8e 99.3%,#c4c4c4 100%);"></div>
<div style="left:2699.2px;top:520.4px;width:563.0px;height:1227.3px;border-radius:41.8px 41.8px 41.8px 41.8px / 44.6px 44.6px 43.2px 43.2px;background:linear-gradient(0deg,#6a6a6a 0,#3a3a3a 6px,#1a1a1a 16px,#0d0d0d 26px,#0d0d0d 100%);"></div>
<div style="left:2699.2px;top:522.2px;width:563.0px;height:1205.3px;border-radius:41.8px 41.8px 41.8px 41.8px / 42.8px 42.8px 30.0px 30.0px;background:#6e6e6e;"></div>
<div style="left:2699.2px;top:524px;width:563.0px;height:1203.5px;border-radius:41.8px 41.8px 41.8px 41.8px / 41.0px 41.0px 29.0px 29.0px;background:#0d0d0d;"></div>
<div style="left:2706px;top:537px;width:549px;height:1189.5px;border-radius:27px;background:#000;overflow:hidden;"><div style="left:0;top:0;width:549px;height:55px;background:#4a5c90;"></div><div style="left:0;top:55px;width:549px;height:1101.5px;background:#faf8ff;"></div></div>
<span style="left:2735.6px;top:555.2px;font-size:20px;line-height:20px;color:#ffffff;letter-spacing:-0.58px;">4:47</span>
<div style="left:2963.8px;top:547.8px;width:33px;height:33px;border-radius:50%;background:radial-gradient(circle at 50% 50%,#1b2a33 0,#0a0d10 22%,#050505 60%);"></div>
<svg style="left:3157px;top:554px;" width="64" height="21" viewBox="0 0 64 21" fill="none"><path d="M1.6 6.4 C7 0.6 17 0.6 22.6 6.4 L12.1 19 Z" fill="#fff"/><path d="M24 18.6 L41 1.6 V18.6 Z" fill="#fff"/><path d="M49.6 3.8 H52.8 V2 H58 V3.8 H61.2 V19 H49.6 Z" fill="#fff"/></svg>
<svg style="left:2749.5px;top:638px;" width="14" height="20" viewBox="0 0 14 20" fill="none"><path d="M11.4 1.8 L3 10 L11.4 18.2" stroke="#1c1b1f" stroke-width="3" fill="none" stroke-linejoin="miter"/></svg>
<span style="left:2941.2px;top:631.6px;font-size:32.2px;line-height:32.2px;color:#1c1b1f;letter-spacing:-0.58px;">Rosie</span>
<svg style="left:3190px;top:634px;" width="28" height="28" viewBox="0 0 28 28" fill="none"><g stroke="#3a3d42" stroke-width="2.5" fill="none" stroke-linejoin="round"><path d="M27.00 14.00 L26.99 14.51 L26.96 15.02 L26.81 15.52 L25.99 15.90 L25.08 16.20 L24.17 16.44 L23.34 16.63 L23.13 16.97 L23.01 17.32 L22.87 17.67 L22.72 18.02 L22.55 18.36 L22.46 18.74 L22.92 19.47 L23.40 20.28 L23.82 21.14 L24.13 21.99 L23.89 22.44 L23.55 22.82 L23.19 23.19 L22.82 23.55 L22.44 23.89 L21.99 24.13 L21.14 23.82 L20.28 23.40 L19.47 22.92 L18.74 22.46 L18.36 22.55 L18.02 22.72 L17.67 22.87 L17.32 23.01 L16.97 23.13 L16.63 23.34 L16.44 24.17 L16.20 25.08 L15.90 25.99 L15.52 26.81 L15.02 26.96 L14.51 26.99 L14.00 27.00 L13.49 26.99 L12.98 26.96 L12.48 26.81 L12.10 25.99 L11.80 25.08 L11.56 24.17 L11.37 23.34 L11.03 23.13 L10.68 23.01 L10.33 22.87 L9.98 22.72 L9.64 22.55 L9.26 22.46 L8.53 22.92 L7.72 23.40 L6.86 23.82 L6.01 24.13 L5.56 23.89 L5.18 23.55 L4.81 23.19 L4.45 22.82 L4.11 22.44 L3.87 21.99 L4.18 21.14 L4.60 20.28 L5.08 19.47 L5.54 18.74 L5.45 18.36 L5.28 18.02 L5.13 17.67 L4.99 17.32 L4.87 16.97 L4.66 16.63 L3.83 16.44 L2.92 16.20 L2.01 15.90 L1.19 15.52 L1.04 15.02 L1.01 14.51 L1.00 14.00 L1.01 13.49 L1.04 12.98 L1.19 12.48 L2.01 12.10 L2.92 11.80 L3.83 11.56 L4.66 11.37 L4.87 11.03 L4.99 10.68 L5.13 10.33 L5.28 9.98 L5.45 9.64 L5.54 9.26 L5.08 8.53 L4.60 7.72 L4.18 6.86 L3.87 6.01 L4.11 5.56 L4.45 5.18 L4.81 4.81 L5.18 4.45 L5.56 4.11 L6.01 3.87 L6.86 4.18 L7.72 4.60 L8.53 5.08 L9.26 5.54 L9.64 5.45 L9.98 5.28 L10.33 5.13 L10.68 4.99 L11.03 4.87 L11.37 4.66 L11.56 3.83 L11.80 2.92 L12.10 2.01 L12.48 1.19 L12.98 1.04 L13.49 1.01 L14.00 1.00 L14.51 1.01 L15.02 1.04 L15.52 1.19 L15.90 2.01 L16.20 2.92 L16.44 3.83 L16.63 4.66 L16.97 4.87 L17.32 4.99 L17.67 5.13 L18.02 5.28 L18.36 5.45 L18.74 5.54 L19.47 5.08 L20.28 4.60 L21.14 4.18 L21.99 3.87 L22.44 4.11 L22.82 4.45 L23.19 4.81 L23.55 5.18 L23.89 5.56 L24.13 6.01 L23.82 6.86 L23.40 7.72 L22.92 8.53 L22.46 9.26 L22.55 9.64 L22.72 9.98 L22.87 10.33 L23.01 10.68 L23.13 11.03 L23.34 11.37 L24.17 11.56 L25.08 11.80 L25.99 12.10 L26.81 12.48 L26.96 12.98 L26.99 13.49 Z"/><circle cx="14" cy="14" r="4.3"/></g></svg>
<div style="left:3220px;top:621px;width:16px;height:16px;border-radius:50%;background:#b3342a;"></div>
<div style="left:2727px;top:704px;width:507px;height:3.2px;background:#c4c7c5;"></div>
<div style="left:2727px;top:808px;width:507px;height:3.2px;background:#c4c7c5;"></div>
<div style="left:2727px;top:912px;width:507px;height:3.2px;background:#c4c7c5;"></div>
<div style="left:2738.0px;top:717.3px;width:53.2px;height:53.2px;border-radius:50%;background:#fff;"></div>
<svg style="left:2743.6px;top:722.9px;" width="42" height="42" viewBox="0 0 42 42" fill="none"><circle cx="21" cy="21" r="20" stroke="#4f8cf5" stroke-width="1.8" fill="none"/><circle cx="21" cy="15.6" r="6.9" fill="#4f8cf5"/><path d="M9 32.8 C9 25.6 14 21.8 21 21.8 C28 21.8 33 25.6 33 32.8 Z" fill="#4f8cf5"/><circle cx="21" cy="15.6" r="8.4" stroke="#fff" stroke-width="1.4" fill="none"/><circle cx="21" cy="15.6" r="6.9" fill="#4f8cf5"/></svg>
<div style="left:2738.0px;top:821.3px;width:53.2px;height:53.2px;border-radius:50%;background:#fff;"></div>
<svg style="left:2743.6px;top:826.9px;" width="42" height="42" viewBox="0 0 42 42" fill="none"><circle cx="21" cy="21" r="20" stroke="#4f8cf5" stroke-width="1.8" fill="none"/><circle cx="21" cy="15.6" r="6.9" fill="#4f8cf5"/><path d="M9 32.8 C9 25.6 14 21.8 21 21.8 C28 21.8 33 25.6 33 32.8 Z" fill="#4f8cf5"/><circle cx="21" cy="15.6" r="8.4" stroke="#fff" stroke-width="1.4" fill="none"/><circle cx="21" cy="15.6" r="6.9" fill="#4f8cf5"/></svg>
<span style="left:2801.9px;top:721.0px;font-size:18.6px;line-height:18.6px;color:#1c1b1f;letter-spacing:0.21px;-webkit-text-stroke:0.4px #1c1b1f;">Orville</span>
<span style="left:2812.2px;top:762.5px;font-size:19.4px;line-height:19.4px;color:#1c1b1f;letter-spacing:-0.21px;">why sky is blue?</span>
<span style="left:2801.9px;top:825.0px;font-size:18.6px;line-height:18.6px;color:#1c1b1f;letter-spacing:0.12px;-webkit-text-stroke:0.4px #1c1b1f;">Jude Belayro</span>
<span style="left:2812.2px;top:866.5px;font-size:19.4px;line-height:19.4px;color:#1c1b1f;letter-spacing:-0.11px;">What day is today</span>
<div style="left:2908px;top:1706.5px;width:144.5px;height:7px;background:#ffffff;border-radius:3.5px;"></div>
<span style="left:29.2px;top:2058.9px;font-size:25.5px;line-height:25.5px;color:#a3a6ad;-webkit-text-stroke:0.25px #a3a6ad;">Install successfully finished in 371 ms. (28 minutes ago)</span>
<span style="left:2836.1px;top:2058.9px;font-size:25.5px;line-height:25.5px;color:#a3a6ad;letter-spacing:-0.57px;-webkit-text-stroke:0.25px #a3a6ad;">27:10</span>
<span style="left:2928.3px;top:2058.9px;font-size:25.5px;line-height:25.5px;color:#a3a6ad;letter-spacing:-1.30px;-webkit-text-stroke:0.25px #a3a6ad;">LF</span>
<span style="left:2988.2px;top:2058.9px;font-size:25.5px;line-height:25.5px;color:#a3a6ad;letter-spacing:0.06px;-webkit-text-stroke:0.25px #a3a6ad;">UTF-8</span>
<span style="left:3094.1px;top:2058.9px;font-size:25.5px;line-height:25.5px;color:#a3a6ad;letter-spacing:0.06px;-webkit-text-stroke:0.25px #a3a6ad;">4 spaces</span>
<svg style="left:3232px;top:2058px;" width="30" height="28" viewBox="0 0 30 28" fill="none"><g stroke="#ced0d6" stroke-width="2.4" fill="none" stroke-linecap="round"><rect x="3.6" y="10.8" width="17" height="13.4" rx="2.4"/><path d="M16.6 10.6 V8.4 C16.6 2 25.8 1.6 26.4 8.2"/><path d="M12.1 15.4 V19.4"/></g></svg>
<svg style="left:3293px;top:2057px;" width="30" height="29" viewBox="0 0 30 29" fill="none"><g stroke="#ced0d6" stroke-width="2.4" fill="none" stroke-linejoin="round" stroke-linecap="round"><path d="M3.4 5.6 Q3.4 3.6 5.4 3.6 H24.8 Q26.8 3.6 26.8 5.6 V25.8 L21.6 20.8 H5.4 Q3.4 20.8 3.4 18.8 Z"/><path d="M15.1 7.6 V13"/></g><circle cx="15.1" cy="16.8" r="1.4" fill="#ced0d6"/></svg>
</body></html>
